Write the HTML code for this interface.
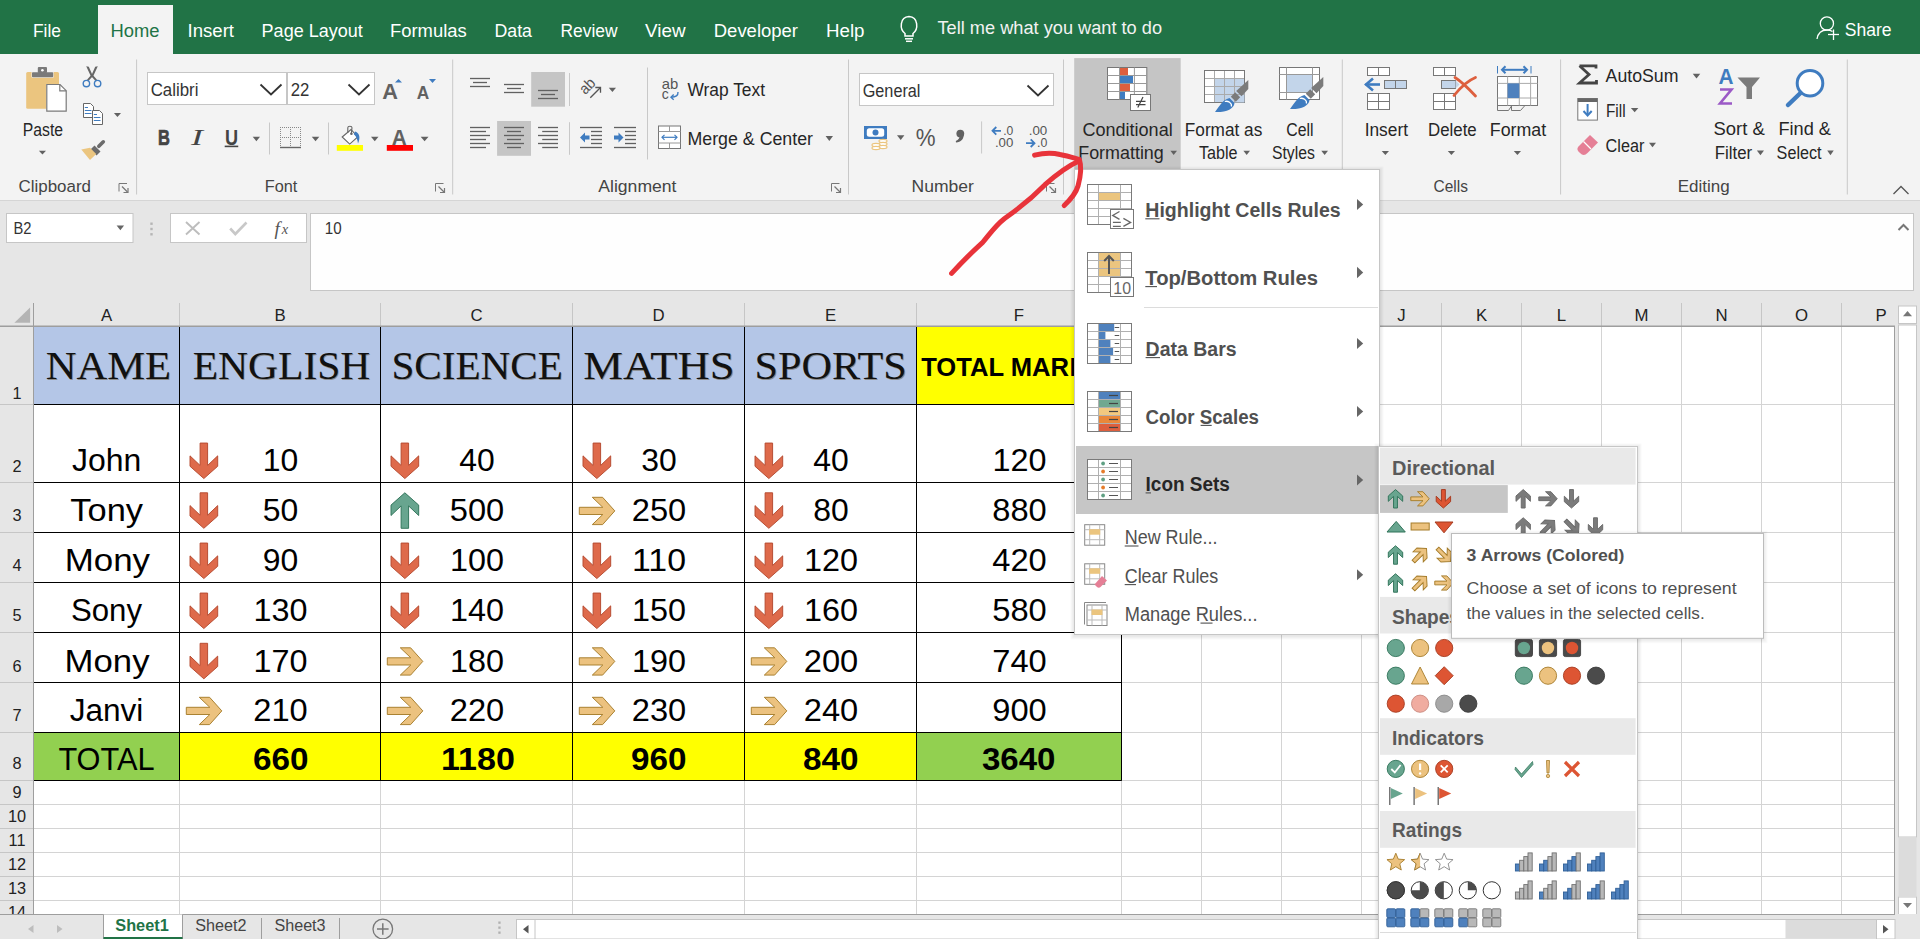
<!DOCTYPE html>
<html><head><meta charset="utf-8"><title>Excel</title>
<style>html,body{margin:0;padding:0;overflow:hidden;background:#e6e6e6;width:1920px;height:939px}svg{display:block}text{white-space:pre}</style>
</head><body>
<svg width="1920" height="939" viewBox="0 0 1920 939">
<rect x="0" y="0" width="1920" height="939" fill="#e6e6e6"/>
<rect x="0" y="0" width="1920" height="54" fill="#217346"/>
<rect x="98" y="5" width="75" height="49" fill="#f3f3f3"/>
<text x="33" y="37" font-family="'Liberation Sans', sans-serif" font-size="18.3" fill="#ffffff" textLength="28" lengthAdjust="spacingAndGlyphs">File</text>
<text x="187.5" y="37" font-family="'Liberation Sans', sans-serif" font-size="18.3" fill="#ffffff" textLength="46.5" lengthAdjust="spacingAndGlyphs">Insert</text>
<text x="261.6" y="37" font-family="'Liberation Sans', sans-serif" font-size="18.3" fill="#ffffff" textLength="101.2" lengthAdjust="spacingAndGlyphs">Page Layout</text>
<text x="390" y="37" font-family="'Liberation Sans', sans-serif" font-size="18.3" fill="#ffffff" textLength="76.7" lengthAdjust="spacingAndGlyphs">Formulas</text>
<text x="494.5" y="37" font-family="'Liberation Sans', sans-serif" font-size="18.3" fill="#ffffff" textLength="37.5" lengthAdjust="spacingAndGlyphs">Data</text>
<text x="560.5" y="37" font-family="'Liberation Sans', sans-serif" font-size="18.3" fill="#ffffff" textLength="57.0" lengthAdjust="spacingAndGlyphs">Review</text>
<text x="645" y="37" font-family="'Liberation Sans', sans-serif" font-size="18.3" fill="#ffffff" textLength="40.5" lengthAdjust="spacingAndGlyphs">View</text>
<text x="713.75" y="37" font-family="'Liberation Sans', sans-serif" font-size="18.3" fill="#ffffff" textLength="84.25" lengthAdjust="spacingAndGlyphs">Developer</text>
<text x="826" y="37" font-family="'Liberation Sans', sans-serif" font-size="18.3" fill="#ffffff" textLength="38.5" lengthAdjust="spacingAndGlyphs">Help</text>
<text x="110.5" y="37" font-family="'Liberation Sans', sans-serif" font-size="18.3" fill="#217346" textLength="49.0" lengthAdjust="spacingAndGlyphs">Home</text>
<path d="M905,33.5 C899.5,29.5 899.5,17 909,16.5 C918.5,17 918.5,29.5 913,33.5 L913,36 L905,36 Z" fill="none" stroke="#fff" stroke-width="1.5"/>
<line x1="905" y1="38.8" x2="913" y2="38.8" stroke="#fff" stroke-width="1.5"/>
<line x1="906" y1="41.3" x2="912" y2="41.3" stroke="#fff" stroke-width="1.5"/>
<text x="937.5" y="33.6" font-family="'Liberation Sans', sans-serif" font-size="17.6" fill="#f2f2f2" textLength="224.5" lengthAdjust="spacingAndGlyphs">Tell me what you want to do</text>
<circle cx="1826.9" cy="23.5" r="6.6" fill="none" stroke="#fff" stroke-width="1.3"/>
<path d="M1817,39 C1818,33 1822,30 1827,30 C1829,30 1831,30.5 1832.5,31.5" fill="none" stroke="#fff" stroke-width="1.3"/>
<line x1="1833.5" y1="29.5" x2="1833.5" y2="40" stroke="#fff" stroke-width="1.3"/>
<line x1="1828" y1="34.5" x2="1839" y2="34.5" stroke="#fff" stroke-width="1.3"/>
<text x="1844.8" y="36.1" font-family="'Liberation Sans', sans-serif" font-size="18.3" fill="#fff" textLength="46.8" lengthAdjust="spacingAndGlyphs">Share</text>
<rect x="0" y="54" width="1920" height="146" fill="#f3f3f3"/>
<line x1="0" y1="200.5" x2="1920" y2="200.5" stroke="#d5d5d5" stroke-width="1"/>
<line x1="136.6" y1="59.5" x2="136.6" y2="194.5" stroke="#c8c8c8" stroke-width="1"/>
<line x1="452.7" y1="59.5" x2="452.7" y2="194.5" stroke="#c8c8c8" stroke-width="1"/>
<line x1="848.5" y1="59.5" x2="848.5" y2="194.5" stroke="#c8c8c8" stroke-width="1"/>
<line x1="1063.5" y1="59.5" x2="1063.5" y2="194.5" stroke="#c8c8c8" stroke-width="1"/>
<line x1="1342.3" y1="59.5" x2="1342.3" y2="194.5" stroke="#c8c8c8" stroke-width="1"/>
<line x1="1560.6" y1="59.5" x2="1560.6" y2="194.5" stroke="#c8c8c8" stroke-width="1"/>
<line x1="1847.3" y1="59.5" x2="1847.3" y2="194.5" stroke="#c8c8c8" stroke-width="1"/>
<text x="18.5" y="191.6" font-family="'Liberation Sans', sans-serif" font-size="16.8" fill="#444" textLength="72.5" lengthAdjust="spacingAndGlyphs">Clipboard</text>
<text x="264.7" y="191.6" font-family="'Liberation Sans', sans-serif" font-size="16.8" fill="#444" textLength="32.6" lengthAdjust="spacingAndGlyphs">Font</text>
<text x="598.3" y="191.6" font-family="'Liberation Sans', sans-serif" font-size="16.8" fill="#444" textLength="78.2" lengthAdjust="spacingAndGlyphs">Alignment</text>
<text x="911.6" y="191.6" font-family="'Liberation Sans', sans-serif" font-size="16.8" fill="#444" textLength="62.3" lengthAdjust="spacingAndGlyphs">Number</text>
<text x="1433.5" y="191.6" font-family="'Liberation Sans', sans-serif" font-size="16.8" fill="#444" textLength="34.4" lengthAdjust="spacingAndGlyphs">Cells</text>
<text x="1677.75" y="191.6" font-family="'Liberation Sans', sans-serif" font-size="16.8" fill="#444" textLength="51.95" lengthAdjust="spacingAndGlyphs">Editing</text>
<path d="M119,191.5 L119,183.5 L127,183.5" fill="none" stroke="#777" stroke-width="1"/>
<line x1="122" y1="186.5" x2="127.5" y2="192.0" stroke="#777" stroke-width="1.2"/>
<path d="M128,188.0 L128,192.5 L123.5,192.5" fill="none" stroke="#777" stroke-width="1.2"/>
<path d="M435.5,191.5 L435.5,183.5 L443.5,183.5" fill="none" stroke="#777" stroke-width="1"/>
<line x1="438.5" y1="186.5" x2="444.0" y2="192.0" stroke="#777" stroke-width="1.2"/>
<path d="M444.5,188.0 L444.5,192.5 L440.0,192.5" fill="none" stroke="#777" stroke-width="1.2"/>
<path d="M831.5,191.5 L831.5,183.5 L839.5,183.5" fill="none" stroke="#777" stroke-width="1"/>
<line x1="834.5" y1="186.5" x2="840.0" y2="192.0" stroke="#777" stroke-width="1.2"/>
<path d="M840.5,188.0 L840.5,192.5 L836.0,192.5" fill="none" stroke="#777" stroke-width="1.2"/>
<path d="M1046.5,191.5 L1046.5,183.5 L1054.5,183.5" fill="none" stroke="#777" stroke-width="1"/>
<line x1="1049.5" y1="186.5" x2="1055.0" y2="192.0" stroke="#777" stroke-width="1.2"/>
<path d="M1055.5,188.0 L1055.5,192.5 L1051.0,192.5" fill="none" stroke="#777" stroke-width="1.2"/>
<rect x="26.2" y="72" width="32.8" height="36.7" fill="#ebc57f" rx="1.5"/>
<rect x="31.5" y="71.8" width="22.2" height="6" fill="#f3f3f3" rx="1"/>
<rect x="32" y="72.3" width="21.2" height="5" fill="#7a7a7a" rx="0.8"/>
<rect x="37.8" y="67" width="9.2" height="6" fill="#7a7a7a" rx="1"/>
<circle cx="42.4" cy="70.3" r="1.3" fill="#fff"/>
<path d="M46.3,84 L60.2,84 L67,90.8 L67,112 L46.3,112 Z" fill="#f3f3f3"/>
<path d="M46.8,84.5 L60,84.5 L66.2,90.7 L66.2,111.2 L46.8,111.2 Z" fill="#fff" stroke="#7a7a7a" stroke-width="1.2"/>
<path d="M59.8,84.5 L59.8,90.9 L66.2,90.9" fill="none" stroke="#7a7a7a" stroke-width="1.2"/>
<text x="22.8" y="135.5" font-family="'Liberation Sans', sans-serif" font-size="17.5" fill="#262626" textLength="40.2" lengthAdjust="spacingAndGlyphs">Paste</text>
<path d="M38.9,150.7 L46,150.7 L42.45,154.5 Z" fill="#616161"/>
<path d="M86.2,66.3 L88.8,66.8 L92,74 L97,79.8 L95.6,81 L90.5,75.5 Z" fill="#666"/>
<path d="M97.8,66.3 L95.2,66.8 L92,74 L87,79.8 L88.4,81 L93.5,75.5 Z" fill="#666"/>
<circle cx="86.4" cy="83.6" r="3.2" fill="none" stroke="#3f7cc0" stroke-width="1.4"/>
<circle cx="97.6" cy="83.6" r="3.2" fill="none" stroke="#3f7cc0" stroke-width="1.4"/>
<path d="M83.5,103.5 L90.5,103.5 L93.5,106.5 L93.5,117.5 L83.5,117.5 Z" fill="#fff" stroke="#666" stroke-width="1"/>
<line x1="84.8" y1="107.5" x2="88" y2="107.5" stroke="#3f7cc0" stroke-width="1"/>
<line x1="84.8" y1="110.5" x2="91.5" y2="110.5" stroke="#3f7cc0" stroke-width="1"/>
<line x1="84.8" y1="113.5" x2="91.5" y2="113.5" stroke="#3f7cc0" stroke-width="1"/>
<path d="M92.5,110.5 L99.5,110.5 L102.5,113.5 L102.5,124.5 L92.5,124.5 Z" fill="#fff" stroke="#666" stroke-width="1"/>
<line x1="93.8" y1="114.5" x2="97" y2="114.5" stroke="#3f7cc0" stroke-width="1"/>
<line x1="93.8" y1="117.5" x2="100.5" y2="117.5" stroke="#3f7cc0" stroke-width="1"/>
<line x1="93.8" y1="120.5" x2="100.5" y2="120.5" stroke="#3f7cc0" stroke-width="1"/>
<path d="M113.9,112.9 L121,112.9 L117.45,117 Z" fill="#616161"/>
<line x1="103.3" y1="141.8" x2="98.8" y2="146.3" stroke="#6b6b6b" stroke-width="3.6" stroke-linecap="round"/>
<path d="M94.5,145.5 L100.5,151.5 L96.5,155.5 L90.5,149.5 Z" fill="#6b6b6b"/>
<path d="M81.3,149.5 L90,147.8 L96.2,154 L90,160 Z" fill="#ebc57f"/>
<rect x="147.5" y="72.5" width="139" height="32" fill="#fff" stroke="#c6c6c6" stroke-width="1"/>
<rect x="287.5" y="72.5" width="87" height="32" fill="#fff" stroke="#c6c6c6" stroke-width="1"/>
<text x="150.7" y="95.5" font-family="'Liberation Sans', sans-serif" font-size="17.5" fill="#333" textLength="47.8" lengthAdjust="spacingAndGlyphs">Calibri</text>
<path d="M260.5,84.5 L271,94.5 L281.5,84.5" fill="none" stroke="#333" stroke-width="1.8"/>
<text x="290.7" y="95.5" font-family="'Liberation Sans', sans-serif" font-size="17.5" fill="#333" textLength="18.6" lengthAdjust="spacingAndGlyphs">22</text>
<path d="M348.5,84.5 L359,94.5 L369.5,84.5" fill="none" stroke="#333" stroke-width="1.8"/>
<text x="382.3" y="98.7" font-family="'Liberation Sans', sans-serif" font-size="22.6" fill="#616161" font-weight="bold" textLength="15.7" lengthAdjust="spacingAndGlyphs">A</text>
<path d="M395,82.5 L402,82.5 L398.5,79 Z" fill="#3f7cc0"/>
<text x="416.8" y="98.7" font-family="'Liberation Sans', sans-serif" font-size="18.5" fill="#616161" font-weight="bold" textLength="12.5" lengthAdjust="spacingAndGlyphs">A</text>
<path d="M429,79 L436,79 L432.5,83 Z" fill="#3f7cc0"/>
<text x="158.1" y="144.7" font-family="'Liberation Sans', sans-serif" font-size="21.5" fill="#444" font-weight="bold" textLength="11.9" lengthAdjust="spacingAndGlyphs" stroke="#444" stroke-width="0.7">B</text>
<text x="191" y="144.9" font-family="'Liberation Serif', serif" font-size="22.3" fill="#444" font-style="italic" textLength="12" lengthAdjust="spacingAndGlyphs">I</text>
<text x="224.9" y="144.7" font-family="'Liberation Sans', sans-serif" font-size="21.5" fill="#444" font-weight="bold" textLength="13.1" lengthAdjust="spacingAndGlyphs">U</text>
<line x1="224.7" y1="146.4" x2="238.25" y2="146.4" stroke="#444" stroke-width="1.6"/>
<path d="M252.7,136.7 L260,136.7 L256.35,141.3 Z" fill="#616161"/>
<line x1="269.5" y1="122.5" x2="269.5" y2="154.5" stroke="#c8c8c8" stroke-width="1"/>
<g fill="#888">
<rect x="280" y="127" width="1" height="1"/>
<rect x="280" y="137" width="1" height="1"/>
<rect x="280" y="127" width="1" height="1"/>
<rect x="290" y="127" width="1" height="1"/>
<rect x="300" y="127" width="1" height="1"/>
<rect x="282" y="127" width="1" height="1"/>
<rect x="282" y="137" width="1" height="1"/>
<rect x="280" y="129" width="1" height="1"/>
<rect x="290" y="129" width="1" height="1"/>
<rect x="300" y="129" width="1" height="1"/>
<rect x="284" y="127" width="1" height="1"/>
<rect x="284" y="137" width="1" height="1"/>
<rect x="280" y="131" width="1" height="1"/>
<rect x="290" y="131" width="1" height="1"/>
<rect x="300" y="131" width="1" height="1"/>
<rect x="286" y="127" width="1" height="1"/>
<rect x="286" y="137" width="1" height="1"/>
<rect x="280" y="133" width="1" height="1"/>
<rect x="290" y="133" width="1" height="1"/>
<rect x="300" y="133" width="1" height="1"/>
<rect x="288" y="127" width="1" height="1"/>
<rect x="288" y="137" width="1" height="1"/>
<rect x="280" y="135" width="1" height="1"/>
<rect x="290" y="135" width="1" height="1"/>
<rect x="300" y="135" width="1" height="1"/>
<rect x="290" y="127" width="1" height="1"/>
<rect x="290" y="137" width="1" height="1"/>
<rect x="280" y="137" width="1" height="1"/>
<rect x="290" y="137" width="1" height="1"/>
<rect x="300" y="137" width="1" height="1"/>
<rect x="292" y="127" width="1" height="1"/>
<rect x="292" y="137" width="1" height="1"/>
<rect x="280" y="139" width="1" height="1"/>
<rect x="290" y="139" width="1" height="1"/>
<rect x="300" y="139" width="1" height="1"/>
<rect x="294" y="127" width="1" height="1"/>
<rect x="294" y="137" width="1" height="1"/>
<rect x="280" y="141" width="1" height="1"/>
<rect x="290" y="141" width="1" height="1"/>
<rect x="300" y="141" width="1" height="1"/>
<rect x="296" y="127" width="1" height="1"/>
<rect x="296" y="137" width="1" height="1"/>
<rect x="280" y="143" width="1" height="1"/>
<rect x="290" y="143" width="1" height="1"/>
<rect x="300" y="143" width="1" height="1"/>
<rect x="298" y="127" width="1" height="1"/>
<rect x="298" y="137" width="1" height="1"/>
<rect x="280" y="145" width="1" height="1"/>
<rect x="290" y="145" width="1" height="1"/>
<rect x="300" y="145" width="1" height="1"/>
<rect x="300" y="127" width="1" height="1"/>
<rect x="300" y="137" width="1" height="1"/>
</g>
<line x1="280" y1="147.5" x2="301" y2="147.5" stroke="#666" stroke-width="1.4"/>
<path d="M311.8,136.7 L319.3,136.7 L315.55,141.3 Z" fill="#616161"/>
<line x1="328.5" y1="122.5" x2="328.5" y2="154.5" stroke="#c8c8c8" stroke-width="1"/>
<path d="M342.2,137 L351,129.5 L357.7,137 L349.7,144.1 Z" fill="#fff" stroke="#666" stroke-width="1.1"/>
<path d="M347.8,133 L347.8,127.8 C347.8,125.8 352,125.8 352,127.8 L351.4,133" fill="none" stroke="#666" stroke-width="1.1"/>
<circle cx="351.4" cy="133.8" r="1.3" fill="#666"/>
<path d="M355,131.5 C359,132.5 361,137 358,143.5 C357.5,139.5 356.5,136.5 353.8,134.2 Z" fill="#3f7cc0"/>
<rect x="336.8" y="145" width="26.2" height="5.8" fill="#ffff00"/>
<path d="M371,136.7 L378.5,136.7 L374.75,141.3 Z" fill="#616161"/>
<text x="391.8" y="145" font-family="'Liberation Sans', sans-serif" font-size="22.6" fill="#616161" font-weight="bold" textLength="15.0" lengthAdjust="spacingAndGlyphs">A</text>
<rect x="386.8" y="145" width="26.2" height="5.8" fill="#ff0000"/>
<path d="M420.7,136.7 L428.5,136.7 L424.6,141.3 Z" fill="#616161"/>
<line x1="470" y1="78.5" x2="490" y2="78.5" stroke="#616161" stroke-width="1.3"/>
<line x1="473" y1="82.5" x2="487" y2="82.5" stroke="#616161" stroke-width="1.3"/>
<line x1="470" y1="86.5" x2="490" y2="86.5" stroke="#616161" stroke-width="1.3"/>
<line x1="504" y1="84.5" x2="524" y2="84.5" stroke="#616161" stroke-width="1.3"/>
<line x1="507" y1="88.5" x2="521" y2="88.5" stroke="#616161" stroke-width="1.3"/>
<line x1="504" y1="92.5" x2="524" y2="92.5" stroke="#616161" stroke-width="1.3"/>
<rect x="531.2" y="72" width="33.8" height="34.7" fill="#c5c5c5"/>
<line x1="538" y1="90.5" x2="558" y2="90.5" stroke="#616161" stroke-width="1.3"/>
<line x1="541" y1="94.5" x2="555" y2="94.5" stroke="#616161" stroke-width="1.3"/>
<line x1="538" y1="98.5" x2="558" y2="98.5" stroke="#616161" stroke-width="1.3"/>
<line x1="569.5" y1="73" x2="569.5" y2="106" stroke="#c8c8c8" stroke-width="1"/>
<text x="0" y="0" font-family="'Liberation Sans', sans-serif" font-size="15.5" fill="#555" textLength="16" lengthAdjust="spacingAndGlyphs" transform="translate(585.2,95.3) rotate(-45)">ab</text>
<line x1="590.3" y1="97.7" x2="600.5" y2="87.5" stroke="#555" stroke-width="1.3"/>
<path d="M595.3,87.5 L600.5,87.5 L600.5,92.7" fill="none" stroke="#555" stroke-width="1.3"/>
<path d="M608.8,87.8 L616,87.8 L612.4,92 Z" fill="#616161"/>
<line x1="647.5" y1="67.5" x2="647.5" y2="159.5" stroke="#c8c8c8" stroke-width="1"/>
<text x="661.8" y="88.8" font-family="'Liberation Sans', sans-serif" font-size="15" fill="#555" textLength="16.5" lengthAdjust="spacingAndGlyphs">ab</text>
<text x="661.8" y="98.6" font-family="'Liberation Sans', sans-serif" font-size="15" fill="#555" textLength="7.0" lengthAdjust="spacingAndGlyphs">c</text>
<path d="M678,92 C678.2,95.5 676,97.2 671.2,97.2" fill="none" stroke="#3f7cc0" stroke-width="1.4"/>
<path d="M673.7,94.6 L671,97.2 L673.7,99.8" fill="none" stroke="#3f7cc0" stroke-width="1.4"/>
<text x="687.5" y="95.6" font-family="'Liberation Sans', sans-serif" font-size="17.5" fill="#262626" textLength="77.5" lengthAdjust="spacingAndGlyphs">Wrap Text</text>
<line x1="470" y1="127.5" x2="490" y2="127.5" stroke="#616161" stroke-width="1.3"/>
<line x1="470" y1="131.5" x2="486" y2="131.5" stroke="#616161" stroke-width="1.3"/>
<line x1="470" y1="135.5" x2="490" y2="135.5" stroke="#616161" stroke-width="1.3"/>
<line x1="470" y1="139.5" x2="486" y2="139.5" stroke="#616161" stroke-width="1.3"/>
<line x1="470" y1="143.5" x2="490" y2="143.5" stroke="#616161" stroke-width="1.3"/>
<line x1="470" y1="147.5" x2="486" y2="147.5" stroke="#616161" stroke-width="1.3"/>
<rect x="497.1" y="121" width="33.9" height="34.8" fill="#c5c5c5"/>
<line x1="504" y1="127.5" x2="524" y2="127.5" stroke="#616161" stroke-width="1.3"/>
<line x1="507" y1="131.5" x2="521" y2="131.5" stroke="#616161" stroke-width="1.3"/>
<line x1="504" y1="135.5" x2="524" y2="135.5" stroke="#616161" stroke-width="1.3"/>
<line x1="507" y1="139.5" x2="521" y2="139.5" stroke="#616161" stroke-width="1.3"/>
<line x1="504" y1="143.5" x2="524" y2="143.5" stroke="#616161" stroke-width="1.3"/>
<line x1="507" y1="147.5" x2="521" y2="147.5" stroke="#616161" stroke-width="1.3"/>
<line x1="538" y1="127.5" x2="558" y2="127.5" stroke="#616161" stroke-width="1.3"/>
<line x1="542.2" y1="131.5" x2="558" y2="131.5" stroke="#616161" stroke-width="1.3"/>
<line x1="538" y1="135.5" x2="558" y2="135.5" stroke="#616161" stroke-width="1.3"/>
<line x1="542.2" y1="139.5" x2="558" y2="139.5" stroke="#616161" stroke-width="1.3"/>
<line x1="538" y1="143.5" x2="558" y2="143.5" stroke="#616161" stroke-width="1.3"/>
<line x1="542.2" y1="147.5" x2="558" y2="147.5" stroke="#616161" stroke-width="1.3"/>
<line x1="569.5" y1="122.2" x2="569.5" y2="154.8" stroke="#c8c8c8" stroke-width="1"/>
<line x1="580" y1="127.5" x2="602" y2="127.5" stroke="#616161" stroke-width="1.3"/>
<line x1="580" y1="147.5" x2="602" y2="147.5" stroke="#616161" stroke-width="1.3"/>
<line x1="591" y1="131.5" x2="602" y2="131.5" stroke="#616161" stroke-width="1.3"/>
<line x1="591" y1="135.5" x2="602" y2="135.5" stroke="#616161" stroke-width="1.3"/>
<line x1="591" y1="139.5" x2="602" y2="139.5" stroke="#616161" stroke-width="1.3"/>
<line x1="591" y1="143.5" x2="602" y2="143.5" stroke="#616161" stroke-width="1.3"/>
<path d="M580,137.5 L585,132.5 L585,135.5 L589.5,135.5 L589.5,139.5 L585,139.5 L585,142.5 Z" fill="#3f7cc0"/>
<line x1="614" y1="127.5" x2="636" y2="127.5" stroke="#616161" stroke-width="1.3"/>
<line x1="614" y1="147.5" x2="636" y2="147.5" stroke="#616161" stroke-width="1.3"/>
<line x1="625" y1="131.5" x2="636" y2="131.5" stroke="#616161" stroke-width="1.3"/>
<line x1="625" y1="135.5" x2="636" y2="135.5" stroke="#616161" stroke-width="1.3"/>
<line x1="625" y1="139.5" x2="636" y2="139.5" stroke="#616161" stroke-width="1.3"/>
<line x1="625" y1="143.5" x2="636" y2="143.5" stroke="#616161" stroke-width="1.3"/>
<path d="M623.5,137.5 L618.5,132.5 L618.5,135.5 L614,135.5 L614,139.5 L618.5,139.5 L618.5,142.5 Z" fill="#3f7cc0"/>
<rect x="658.5" y="126" width="22" height="22.5" fill="#fff" stroke="#777" stroke-width="1"/>
<line x1="658.5" y1="131.5" x2="680.5" y2="131.5" stroke="#999" stroke-width="1"/>
<line x1="658.5" y1="143" x2="680.5" y2="143" stroke="#999" stroke-width="1"/>
<line x1="669.5" y1="126" x2="669.5" y2="131.5" stroke="#999" stroke-width="1"/>
<line x1="669.5" y1="143" x2="669.5" y2="148.5" stroke="#999" stroke-width="1"/>
<line x1="662" y1="137.3" x2="677" y2="137.3" stroke="#3f7cc0" stroke-width="1.2"/>
<path d="M664.5,134.8 L662,137.3 L664.5,139.8 M674.5,134.8 L677,137.3 L674.5,139.8" fill="none" stroke="#3f7cc0" stroke-width="1.2"/>
<text x="687.5" y="144.6" font-family="'Liberation Sans', sans-serif" font-size="17.5" fill="#262626" textLength="125.5" lengthAdjust="spacingAndGlyphs">Merge &amp; Center</text>
<path d="M825.6,136 L833,136 L829.3,141 Z" fill="#616161"/>
<rect x="859.5" y="73.5" width="194" height="32" fill="#fff" stroke="#c6c6c6" stroke-width="1"/>
<text x="862.7" y="96.7" font-family="'Liberation Sans', sans-serif" font-size="17.5" fill="#333" textLength="57.8" lengthAdjust="spacingAndGlyphs">General</text>
<path d="M1027.5,85.5 L1038,95.5 L1048.5,85.5" fill="none" stroke="#333" stroke-width="1.8"/>
<rect x="864" y="126" width="23" height="13" fill="#3f7cc0"/>
<rect x="866.8" y="128.3" width="17.4" height="8.4" fill="#fff" rx="2.5"/>
<circle cx="875.5" cy="132.5" r="3" fill="#3f7cc0"/>
<ellipse cx="883" cy="141" rx="4" ry="1.6" fill="#fff" stroke="#ebc57f" stroke-width="1.2"/>
<ellipse cx="883" cy="144" rx="4" ry="1.6" fill="#fff" stroke="#ebc57f" stroke-width="1.2"/>
<ellipse cx="883" cy="147" rx="4" ry="1.6" fill="#fff" stroke="#ebc57f" stroke-width="1.2"/>
<ellipse cx="876" cy="145" rx="4" ry="1.6" fill="#fff" stroke="#ebc57f" stroke-width="1.2"/>
<ellipse cx="876" cy="148" rx="4" ry="1.6" fill="#fff" stroke="#ebc57f" stroke-width="1.2"/>
<path d="M897,135.3 L904.4,135.3 L900.7,140 Z" fill="#616161"/>
<text x="915.8" y="146.1" font-family="'Liberation Sans', sans-serif" font-size="24" fill="#555" textLength="19.8" lengthAdjust="spacingAndGlyphs">%</text>
<circle cx="960.3" cy="133.6" r="3.9" fill="#616161"/>
<path d="M963.6,134.5 C964,139 961,142 956,142.6 L955.8,141 C958.5,140 959.8,138 959.6,135.5 Z" fill="#616161"/>
<line x1="981.6" y1="121.4" x2="981.6" y2="153.5" stroke="#c8c8c8" stroke-width="1"/>
<text x="1003.2" y="134.6" font-family="'Liberation Sans', sans-serif" font-size="12" fill="#555" textLength="10.1" lengthAdjust="spacingAndGlyphs">.0</text>
<text x="994.9" y="146.9" font-family="'Liberation Sans', sans-serif" font-size="12" fill="#555" textLength="18.4" lengthAdjust="spacingAndGlyphs">.00</text>
<path d="M992.5,130.8 L1001,130.8 M996.3,127 L992.5,130.8 L996.3,134.6" fill="none" stroke="#3f7cc0" stroke-width="1.8"/>
<text x="1028.75" y="134.6" font-family="'Liberation Sans', sans-serif" font-size="12" fill="#555" textLength="18.55" lengthAdjust="spacingAndGlyphs">.00</text>
<text x="1037" y="146.9" font-family="'Liberation Sans', sans-serif" font-size="12" fill="#555" textLength="10.3" lengthAdjust="spacingAndGlyphs">.0</text>
<path d="M1026,143.2 L1034.5,143.2 M1030.7,139.4 L1034.5,143.2 L1030.7,147" fill="none" stroke="#3f7cc0" stroke-width="1.8"/>
<rect x="1074.2" y="58.1" width="106.5" height="111" fill="#c5c5c5"/>
<rect x="1107.5" y="67.5" width="39.3" height="32" fill="#fff" stroke="#777" stroke-width="1"/>
<line x1="1119.5" y1="67.5" x2="1119.5" y2="99.5" stroke="#999" stroke-width="1"/>
<line x1="1134.4" y1="67.5" x2="1134.4" y2="99.5" stroke="#999" stroke-width="1"/>
<line x1="1107.5" y1="75.5" x2="1146.8" y2="75.5" stroke="#999" stroke-width="1"/>
<line x1="1107.5" y1="83.5" x2="1146.8" y2="83.5" stroke="#999" stroke-width="1"/>
<line x1="1107.5" y1="91.5" x2="1146.8" y2="91.5" stroke="#999" stroke-width="1"/>
<rect x="1120" y="68" width="8" height="7" fill="#dd5f3e"/>
<rect x="1120" y="76" width="13" height="7" fill="#3f7cc0"/>
<rect x="1120" y="84" width="10" height="7" fill="#dd5f3e"/>
<rect x="1120" y="92" width="5" height="7" fill="#3f7cc0"/>
<rect x="1130.5" y="94.5" width="20" height="16" fill="#fff" stroke="#777" stroke-width="1"/>
<path d="M1136,101.3 L1145.5,101.3 M1136,104.6 L1145.5,104.6 M1143,97 L1137.8,107.5" fill="none" stroke="#444" stroke-width="1.2"/>
<text x="1082.4" y="135.6" font-family="'Liberation Sans', sans-serif" font-size="17.5" fill="#262626" textLength="90.3" lengthAdjust="spacingAndGlyphs">Conditional</text>
<text x="1078.2" y="158.8" font-family="'Liberation Sans', sans-serif" font-size="17.5" fill="#262626" textLength="85.6" lengthAdjust="spacingAndGlyphs">Formatting</text>
<path d="M1170.4,150.7 L1177,150.7 L1173.7,155 Z" fill="#616161"/>
<rect x="1204.5" y="70.5" width="40" height="32" fill="#fff" stroke="#777" stroke-width="1"/>
<rect x="1214.5" y="78.5" width="30" height="24" fill="#c3d5ea"/>
<line x1="1214.5" y1="70.5" x2="1214.5" y2="102.5" stroke="#aaa" stroke-width="1"/>
<line x1="1224.5" y1="70.5" x2="1224.5" y2="102.5" stroke="#aaa" stroke-width="1"/>
<line x1="1234.5" y1="70.5" x2="1234.5" y2="102.5" stroke="#aaa" stroke-width="1"/>
<line x1="1204.5" y1="78.5" x2="1244.5" y2="78.5" stroke="#aaa" stroke-width="1"/>
<line x1="1204.5" y1="86.5" x2="1244.5" y2="86.5" stroke="#aaa" stroke-width="1"/>
<line x1="1204.5" y1="94.5" x2="1244.5" y2="94.5" stroke="#aaa" stroke-width="1"/>
<line x1="1204.5" y1="70.5" x2="1204.5" y2="102.5" stroke="#777" stroke-width="1"/>
<line x1="1204.5" y1="70.5" x2="1244.5" y2="70.5" stroke="#777" stroke-width="1"/>
<line x1="1204.5" y1="102.5" x2="1230" y2="102.5" stroke="#777" stroke-width="1"/>
<line x1="1244.5" y1="70.5" x2="1244.5" y2="84" stroke="#777" stroke-width="1"/>
<g transform="translate(0,0)">
<path d="M1248.3,80 L1248.3,89 L1241.5,96.3 L1236.2,91 Z" fill="#7b7b7b"/>
<path d="M1235.2,92.3 L1240.2,97.3 L1235.8,101.7 L1230.8,96.7 Z" fill="#7b7b7b"/>
<path d="M1229.5,98 L1234.5,103 C1234,109 1226,112.5 1215,112 C1219,107 1222,100 1229.5,98 Z" fill="#3f7cc0"/>
<path d="M1224.8,101.5 C1228,100.5 1232,103 1231.5,106.5" fill="none" stroke="#fff" stroke-width="1.3"/>
</g>
<text x="1184.8" y="135.6" font-family="'Liberation Sans', sans-serif" font-size="17.5" fill="#262626" textLength="77.5" lengthAdjust="spacingAndGlyphs">Format as</text>
<text x="1199" y="158.8" font-family="'Liberation Sans', sans-serif" font-size="17.5" fill="#262626" textLength="38.6" lengthAdjust="spacingAndGlyphs">Table</text>
<path d="M1243.4,150.7 L1250,150.7 L1246.7,155 Z" fill="#616161"/>
<rect x="1279.5" y="67.5" width="40" height="32" fill="#fff" stroke="#777" stroke-width="1"/>
<rect x="1286.5" y="74.5" width="26" height="18" fill="#c3d5ea"/>
<line x1="1286.5" y1="67.5" x2="1286.5" y2="99.5" stroke="#999" stroke-width="1"/>
<line x1="1312.5" y1="67.5" x2="1312.5" y2="92.5" stroke="#999" stroke-width="1"/>
<line x1="1279.5" y1="74.5" x2="1319.5" y2="74.5" stroke="#999" stroke-width="1"/>
<line x1="1279.5" y1="92.5" x2="1312.5" y2="92.5" stroke="#999" stroke-width="1"/>
<g transform="translate(75,-3)">
<path d="M1248.3,80 L1248.3,89 L1241.5,96.3 L1236.2,91 Z" fill="#7b7b7b"/>
<path d="M1235.2,92.3 L1240.2,97.3 L1235.8,101.7 L1230.8,96.7 Z" fill="#7b7b7b"/>
<path d="M1229.5,98 L1234.5,103 C1234,109 1226,112.5 1215,112 C1219,107 1222,100 1229.5,98 Z" fill="#3f7cc0"/>
<path d="M1224.8,101.5 C1228,100.5 1232,103 1231.5,106.5" fill="none" stroke="#fff" stroke-width="1.3"/>
</g>
<text x="1286.2" y="135.6" font-family="'Liberation Sans', sans-serif" font-size="17.5" fill="#262626" textLength="27.3" lengthAdjust="spacingAndGlyphs">Cell</text>
<text x="1271.9" y="158.8" font-family="'Liberation Sans', sans-serif" font-size="17.5" fill="#262626" textLength="42.9" lengthAdjust="spacingAndGlyphs">Styles</text>
<path d="M1321.3,150.7 L1328,150.7 L1324.65,155 Z" fill="#616161"/>
<rect x="1367.5" y="67.5" width="22" height="8" fill="#fff" stroke="#777" stroke-width="1"/>
<line x1="1378.5" y1="67.5" x2="1378.5" y2="75.5" stroke="#777" stroke-width="1"/>
<rect x="1384.5" y="80.5" width="22" height="8" fill="#c3d5ea" stroke="#777" stroke-width="1"/>
<line x1="1395.5" y1="80.5" x2="1395.5" y2="88.5" stroke="#777" stroke-width="1"/>
<rect x="1367.5" y="93.5" width="22" height="16" fill="#fff" stroke="#777" stroke-width="1"/>
<line x1="1378.5" y1="93.5" x2="1378.5" y2="109.5" stroke="#777" stroke-width="1"/>
<line x1="1367.5" y1="101.5" x2="1389.5" y2="101.5" stroke="#777" stroke-width="1"/>
<line x1="1365.5" y1="84.5" x2="1380" y2="84.5" stroke="#3f7cc0" stroke-width="2.6"/>
<path d="M1373,78.5 L1366,84.5 L1373,90.5" fill="none" stroke="#3f7cc0" stroke-width="2.6"/>
<text x="1364.7" y="135.6" font-family="'Liberation Sans', sans-serif" font-size="17.5" fill="#262626" textLength="43.3" lengthAdjust="spacingAndGlyphs">Insert</text>
<path d="M1381.7,151 L1389,151 L1385.35,155 Z" fill="#616161"/>
<rect x="1433.5" y="67.5" width="22" height="8" fill="#fff" stroke="#777" stroke-width="1"/>
<line x1="1444.5" y1="67.5" x2="1444.5" y2="75.5" stroke="#777" stroke-width="1"/>
<rect x="1441.5" y="80.5" width="14" height="8" fill="#c3d5ea" stroke="#777" stroke-width="1"/>
<path d="M1455.5,80.5 L1459.5,84.5 L1455.5,88.5 Z" fill="#c3d5ea"/>
<rect x="1433.5" y="93.5" width="22" height="16" fill="#fff" stroke="#777" stroke-width="1"/>
<line x1="1444.5" y1="93.5" x2="1444.5" y2="109.5" stroke="#777" stroke-width="1"/>
<line x1="1433.5" y1="101.5" x2="1455.5" y2="101.5" stroke="#777" stroke-width="1"/>
<path d="M1455,77.5 C1462,82 1469,89 1475.5,96 M1475.5,77.5 C1467,81 1460,88 1454,95.5" fill="none" stroke="#dd5f3e" stroke-width="2.8" stroke-linecap="round"/>
<text x="1428" y="135.6" font-family="'Liberation Sans', sans-serif" font-size="17.5" fill="#262626" textLength="48.7" lengthAdjust="spacingAndGlyphs">Delete</text>
<path d="M1447.8,151 L1455,151 L1451.4,155 Z" fill="#616161"/>
<line x1="1497.5" y1="66" x2="1497.5" y2="73.5" stroke="#3f7cc0" stroke-width="1"/>
<line x1="1531" y1="66" x2="1531" y2="73.5" stroke="#3f7cc0" stroke-width="1"/>
<line x1="1502" y1="69.8" x2="1527" y2="69.8" stroke="#3f7cc0" stroke-width="2"/>
<path d="M1505.5,66.3 L1502,69.8 L1505.5,73.3 M1523.5,66.3 L1527,69.8 L1523.5,73.3" fill="none" stroke="#3f7cc0" stroke-width="2"/>
<rect x="1497.5" y="76.5" width="40" height="29" fill="#fff" stroke="#777" stroke-width="1"/>
<line x1="1507.6" y1="76.5" x2="1507.6" y2="105.5" stroke="#aaa" stroke-width="1"/>
<line x1="1519.3" y1="76.5" x2="1519.3" y2="105.5" stroke="#aaa" stroke-width="1"/>
<line x1="1530.6" y1="76.5" x2="1530.6" y2="105.5" stroke="#aaa" stroke-width="1"/>
<line x1="1497.5" y1="83.4" x2="1537.5" y2="83.4" stroke="#aaa" stroke-width="1"/>
<line x1="1497.5" y1="98" x2="1537.5" y2="98" stroke="#aaa" stroke-width="1"/>
<rect x="1507.6" y="83.4" width="11.7" height="14.6" fill="#4f81bd"/>
<path d="M1497.5,105.5 L1497.5,110.5 L1508.5,110.5 L1511.5,106 M1511.5,106 L1511.5,110.5 L1520.5,110.5 L1524.5,106" fill="none" stroke="#777" stroke-width="1"/>
<text x="1489.8" y="135.6" font-family="'Liberation Sans', sans-serif" font-size="17.5" fill="#262626" textLength="56.4" lengthAdjust="spacingAndGlyphs">Format</text>
<path d="M1513.8,151 L1521,151 L1517.4,155 Z" fill="#616161"/>
<path d="M1579.5,65.8 L1596,65.8 L1596,68.5 M1579.5,65.8 L1589,74.5 L1579.5,83 L1596.5,83 L1596.5,80" fill="none" stroke="#444" stroke-width="2.8"/>
<text x="1605.6" y="81.8" font-family="'Liberation Sans', sans-serif" font-size="17.5" fill="#262626" textLength="72.9" lengthAdjust="spacingAndGlyphs">AutoSum</text>
<path d="M1692.75,73.75 L1700.25,73.75 L1696.5,78.4 Z" fill="#616161"/>
<rect x="1577.8" y="98.5" width="19.6" height="21.6" fill="#fff" stroke="#777" stroke-width="1"/>
<rect x="1577.8" y="98.5" width="19.6" height="3.5" fill="#666"/>
<line x1="1587.6" y1="104" x2="1587.6" y2="115" stroke="#3f7cc0" stroke-width="2"/>
<path d="M1583.5,111 L1587.6,115.5 L1591.7,111" fill="none" stroke="#3f7cc0" stroke-width="2"/>
<text x="1606" y="116.5" font-family="'Liberation Sans', sans-serif" font-size="17.5" fill="#262626" textLength="19.6" lengthAdjust="spacingAndGlyphs">Fill</text>
<path d="M1630.9,107.9 L1638.4,107.9 L1634.65,112.2 Z" fill="#616161"/>
<path d="M1590,135 L1598,142.5 L1587.5,153 C1585,155.5 1582.5,155.5 1580,153 L1578.5,151.5 C1577,150 1577,148 1578.5,146.5 Z" fill="#e57f96"/>
<line x1="1583.5" y1="141.5" x2="1591" y2="149" stroke="#fff" stroke-width="1.3"/>
<text x="1605.6" y="151.6" font-family="'Liberation Sans', sans-serif" font-size="17.5" fill="#262626" textLength="38.8" lengthAdjust="spacingAndGlyphs">Clear</text>
<path d="M1649,142.75 L1656,142.75 L1652.5,147.25 Z" fill="#616161"/>
<text x="1718.4" y="83.5" font-family="'Liberation Sans', sans-serif" font-size="22.5" fill="#3f7cc0" font-weight="bold" textLength="15.0" lengthAdjust="spacingAndGlyphs">A</text>
<path d="M1720,89.5 L1731.5,89.5 L1720,103.5 L1732,103.5" fill="none" stroke="#9b59c6" stroke-width="2.6"/>
<path d="M1737.5,77.5 L1760,77.5 L1752,87 L1752,99 L1746.5,99 L1746.5,87 Z" fill="#7b7b7b"/>
<circle cx="1810" cy="83.2" r="12.8" fill="#fff" stroke="#3f7cc0" stroke-width="3"/>
<line x1="1800.5" y1="93" x2="1788" y2="105" stroke="#3f7cc0" stroke-width="4.5" stroke-linecap="round"/>
<text x="1713.4" y="135.25" font-family="'Liberation Sans', sans-serif" font-size="17.5" fill="#262626" textLength="51.35" lengthAdjust="spacingAndGlyphs">Sort &amp;</text>
<text x="1714.7" y="159" font-family="'Liberation Sans', sans-serif" font-size="17.5" fill="#262626" textLength="37.5" lengthAdjust="spacingAndGlyphs">Filter</text>
<path d="M1756.9,150.6 L1764,150.6 L1760.45,155.3 Z" fill="#616161"/>
<text x="1778.4" y="135.25" font-family="'Liberation Sans', sans-serif" font-size="17.5" fill="#262626" textLength="52.6" lengthAdjust="spacingAndGlyphs">Find &amp;</text>
<text x="1776.6" y="159" font-family="'Liberation Sans', sans-serif" font-size="17.5" fill="#262626" textLength="45.0" lengthAdjust="spacingAndGlyphs">Select</text>
<path d="M1827.2,150.6 L1833.75,150.6 L1830.475,155.3 Z" fill="#616161"/>
<path d="M1893.5,194 L1901,186.5 L1908.5,194" fill="none" stroke="#555" stroke-width="1.3"/>
<rect x="6.5" y="213.5" width="126.5" height="29" fill="#fff" stroke="#c6c6c6" stroke-width="1"/>
<text x="13.5" y="234.0" font-family="'Liberation Sans', sans-serif" font-size="16.8" fill="#333" textLength="18.0" lengthAdjust="spacingAndGlyphs">B2</text>
<path d="M116.6,225.6 L124.1,225.6 L120.35,230.25 Z" fill="#666"/>
<rect x="150.3" y="222.5" width="2.4" height="2.4" fill="#b5b5b5"/>
<rect x="150.3" y="227.8" width="2.4" height="2.4" fill="#b5b5b5"/>
<rect x="150.3" y="233.1" width="2.4" height="2.4" fill="#b5b5b5"/>
<rect x="170.5" y="213.5" width="136" height="29" fill="#fff" stroke="#c6c6c6" stroke-width="1"/>
<path d="M186,222 L199.5,234.5 M199.5,222 L186,234.5" fill="none" stroke="#bdbdbd" stroke-width="1.9"/>
<path d="M230.2,228.5 L235.3,234 L246.5,222.5" fill="none" stroke="#c8c8c8" stroke-width="2.6"/>
<text x="274.5" y="235" font-family="'Liberation Serif', serif" font-size="19" fill="#555" font-style="italic">f</text>
<text x="281.8" y="234.3" font-family="'Liberation Serif', serif" font-size="14.5" fill="#555" font-style="italic">x</text>
<rect x="310.5" y="213.5" width="1603" height="77" fill="#fefefe" stroke="#c6c6c6" stroke-width="1"/>
<text x="324.75" y="234.2" font-family="'Liberation Sans', sans-serif" font-size="16.8" fill="#333" textLength="16.85" lengthAdjust="spacingAndGlyphs">10</text>
<path d="M1898.5,230 L1903.5,225 L1908.5,230" fill="none" stroke="#777" stroke-width="2"/>
<rect x="0" y="303" width="1895" height="23.5" fill="#e6e6e6"/>
<rect x="33.5" y="326.5" width="1861.5" height="587.5" fill="#ffffff"/>
<line x1="179.5" y1="326.5" x2="179.5" y2="914" stroke="#d4d4d4" stroke-width="1"/>
<line x1="380.5" y1="326.5" x2="380.5" y2="914" stroke="#d4d4d4" stroke-width="1"/>
<line x1="572.5" y1="326.5" x2="572.5" y2="914" stroke="#d4d4d4" stroke-width="1"/>
<line x1="744.5" y1="326.5" x2="744.5" y2="914" stroke="#d4d4d4" stroke-width="1"/>
<line x1="916.5" y1="326.5" x2="916.5" y2="914" stroke="#d4d4d4" stroke-width="1"/>
<line x1="1121.5" y1="326.5" x2="1121.5" y2="914" stroke="#d4d4d4" stroke-width="1"/>
<line x1="1201.5" y1="326.5" x2="1201.5" y2="914" stroke="#d4d4d4" stroke-width="1"/>
<line x1="1281.5" y1="326.5" x2="1281.5" y2="914" stroke="#d4d4d4" stroke-width="1"/>
<line x1="1361.5" y1="326.5" x2="1361.5" y2="914" stroke="#d4d4d4" stroke-width="1"/>
<line x1="1441.5" y1="326.5" x2="1441.5" y2="914" stroke="#d4d4d4" stroke-width="1"/>
<line x1="1521.5" y1="326.5" x2="1521.5" y2="914" stroke="#d4d4d4" stroke-width="1"/>
<line x1="1601.5" y1="326.5" x2="1601.5" y2="914" stroke="#d4d4d4" stroke-width="1"/>
<line x1="1681.5" y1="326.5" x2="1681.5" y2="914" stroke="#d4d4d4" stroke-width="1"/>
<line x1="1761.5" y1="326.5" x2="1761.5" y2="914" stroke="#d4d4d4" stroke-width="1"/>
<line x1="1841.5" y1="326.5" x2="1841.5" y2="914" stroke="#d4d4d4" stroke-width="1"/>
<line x1="33.5" y1="404.5" x2="1895" y2="404.5" stroke="#d4d4d4" stroke-width="1"/>
<line x1="33.5" y1="482.5" x2="1895" y2="482.5" stroke="#d4d4d4" stroke-width="1"/>
<line x1="33.5" y1="532.5" x2="1895" y2="532.5" stroke="#d4d4d4" stroke-width="1"/>
<line x1="33.5" y1="582.5" x2="1895" y2="582.5" stroke="#d4d4d4" stroke-width="1"/>
<line x1="33.5" y1="632.5" x2="1895" y2="632.5" stroke="#d4d4d4" stroke-width="1"/>
<line x1="33.5" y1="682.5" x2="1895" y2="682.5" stroke="#d4d4d4" stroke-width="1"/>
<line x1="33.5" y1="732.5" x2="1895" y2="732.5" stroke="#d4d4d4" stroke-width="1"/>
<line x1="33.5" y1="780.5" x2="1895" y2="780.5" stroke="#d4d4d4" stroke-width="1"/>
<line x1="33.5" y1="804.5" x2="1895" y2="804.5" stroke="#d4d4d4" stroke-width="1"/>
<line x1="33.5" y1="828.5" x2="1895" y2="828.5" stroke="#d4d4d4" stroke-width="1"/>
<line x1="33.5" y1="852.5" x2="1895" y2="852.5" stroke="#d4d4d4" stroke-width="1"/>
<line x1="33.5" y1="876.5" x2="1895" y2="876.5" stroke="#d4d4d4" stroke-width="1"/>
<line x1="33.5" y1="900.5" x2="1895" y2="900.5" stroke="#d4d4d4" stroke-width="1"/>
<line x1="179.5" y1="303" x2="179.5" y2="326" stroke="#c6c6c6" stroke-width="1"/>
<line x1="380.5" y1="303" x2="380.5" y2="326" stroke="#c6c6c6" stroke-width="1"/>
<line x1="572.5" y1="303" x2="572.5" y2="326" stroke="#c6c6c6" stroke-width="1"/>
<line x1="744.5" y1="303" x2="744.5" y2="326" stroke="#c6c6c6" stroke-width="1"/>
<line x1="916.5" y1="303" x2="916.5" y2="326" stroke="#c6c6c6" stroke-width="1"/>
<line x1="1121.5" y1="303" x2="1121.5" y2="326" stroke="#c6c6c6" stroke-width="1"/>
<line x1="1201.5" y1="303" x2="1201.5" y2="326" stroke="#c6c6c6" stroke-width="1"/>
<line x1="1281.5" y1="303" x2="1281.5" y2="326" stroke="#c6c6c6" stroke-width="1"/>
<line x1="1361.5" y1="303" x2="1361.5" y2="326" stroke="#c6c6c6" stroke-width="1"/>
<line x1="1441.5" y1="303" x2="1441.5" y2="326" stroke="#c6c6c6" stroke-width="1"/>
<line x1="1521.5" y1="303" x2="1521.5" y2="326" stroke="#c6c6c6" stroke-width="1"/>
<line x1="1601.5" y1="303" x2="1601.5" y2="326" stroke="#c6c6c6" stroke-width="1"/>
<line x1="1681.5" y1="303" x2="1681.5" y2="326" stroke="#c6c6c6" stroke-width="1"/>
<line x1="1761.5" y1="303" x2="1761.5" y2="326" stroke="#c6c6c6" stroke-width="1"/>
<line x1="1841.5" y1="303" x2="1841.5" y2="326" stroke="#c6c6c6" stroke-width="1"/>
<line x1="0" y1="326" x2="1895" y2="326" stroke="#9e9e9e" stroke-width="1"/>
<text x="106.5" y="321" font-family="'Liberation Sans', sans-serif" font-size="16.8" fill="#222" text-anchor="middle">A</text>
<text x="280.0" y="321" font-family="'Liberation Sans', sans-serif" font-size="16.8" fill="#222" text-anchor="middle">B</text>
<text x="476.5" y="321" font-family="'Liberation Sans', sans-serif" font-size="16.8" fill="#222" text-anchor="middle">C</text>
<text x="658.5" y="321" font-family="'Liberation Sans', sans-serif" font-size="16.8" fill="#222" text-anchor="middle">D</text>
<text x="830.5" y="321" font-family="'Liberation Sans', sans-serif" font-size="16.8" fill="#222" text-anchor="middle">E</text>
<text x="1019.0" y="321" font-family="'Liberation Sans', sans-serif" font-size="16.8" fill="#222" text-anchor="middle">F</text>
<text x="1161.5" y="321" font-family="'Liberation Sans', sans-serif" font-size="16.8" fill="#222" text-anchor="middle">G</text>
<text x="1241.5" y="321" font-family="'Liberation Sans', sans-serif" font-size="16.8" fill="#222" text-anchor="middle">H</text>
<text x="1321.5" y="321" font-family="'Liberation Sans', sans-serif" font-size="16.8" fill="#222" text-anchor="middle">I</text>
<text x="1401.5" y="321" font-family="'Liberation Sans', sans-serif" font-size="16.8" fill="#222" text-anchor="middle">J</text>
<text x="1481.5" y="321" font-family="'Liberation Sans', sans-serif" font-size="16.8" fill="#222" text-anchor="middle">K</text>
<text x="1561.5" y="321" font-family="'Liberation Sans', sans-serif" font-size="16.8" fill="#222" text-anchor="middle">L</text>
<text x="1641.5" y="321" font-family="'Liberation Sans', sans-serif" font-size="16.8" fill="#222" text-anchor="middle">M</text>
<text x="1721.5" y="321" font-family="'Liberation Sans', sans-serif" font-size="16.8" fill="#222" text-anchor="middle">N</text>
<text x="1801.5" y="321" font-family="'Liberation Sans', sans-serif" font-size="16.8" fill="#222" text-anchor="middle">O</text>
<text x="1881" y="321" font-family="'Liberation Sans', sans-serif" font-size="16.8" fill="#222" text-anchor="middle">P</text>
<path d="M14.4,322.7 L30.1,322.7 L30.1,307.5 Z" fill="#b4b4b4"/>
<line x1="33.5" y1="303" x2="33.5" y2="914" stroke="#9e9e9e" stroke-width="1"/>
<text x="17" y="399" font-family="'Liberation Sans', sans-serif" font-size="16.3" fill="#222" text-anchor="middle">1</text>
<text x="17" y="471.8" font-family="'Liberation Sans', sans-serif" font-size="16.3" fill="#222" text-anchor="middle">2</text>
<text x="17" y="521" font-family="'Liberation Sans', sans-serif" font-size="16.3" fill="#222" text-anchor="middle">3</text>
<text x="17" y="571" font-family="'Liberation Sans', sans-serif" font-size="16.3" fill="#222" text-anchor="middle">4</text>
<text x="17" y="621" font-family="'Liberation Sans', sans-serif" font-size="16.3" fill="#222" text-anchor="middle">5</text>
<text x="17" y="671.5" font-family="'Liberation Sans', sans-serif" font-size="16.3" fill="#222" text-anchor="middle">6</text>
<text x="17" y="721" font-family="'Liberation Sans', sans-serif" font-size="16.3" fill="#222" text-anchor="middle">7</text>
<text x="17" y="769.4" font-family="'Liberation Sans', sans-serif" font-size="16.3" fill="#222" text-anchor="middle">8</text>
<text x="17" y="798" font-family="'Liberation Sans', sans-serif" font-size="16.3" fill="#222" text-anchor="middle">9</text>
<text x="17" y="822" font-family="'Liberation Sans', sans-serif" font-size="16.3" fill="#222" text-anchor="middle">10</text>
<text x="17" y="845.9" font-family="'Liberation Sans', sans-serif" font-size="16.3" fill="#222" text-anchor="middle">11</text>
<text x="17" y="869.7" font-family="'Liberation Sans', sans-serif" font-size="16.3" fill="#222" text-anchor="middle">12</text>
<text x="17" y="893.7" font-family="'Liberation Sans', sans-serif" font-size="16.3" fill="#222" text-anchor="middle">13</text>
<text x="17" y="917.5" font-family="'Liberation Sans', sans-serif" font-size="16.3" fill="#222" text-anchor="middle">14</text>
<line x1="0" y1="404.5" x2="33.5" y2="404.5" stroke="#c6c6c6" stroke-width="1"/>
<line x1="0" y1="482.5" x2="33.5" y2="482.5" stroke="#c6c6c6" stroke-width="1"/>
<line x1="0" y1="532.5" x2="33.5" y2="532.5" stroke="#c6c6c6" stroke-width="1"/>
<line x1="0" y1="582.5" x2="33.5" y2="582.5" stroke="#c6c6c6" stroke-width="1"/>
<line x1="0" y1="632.5" x2="33.5" y2="632.5" stroke="#c6c6c6" stroke-width="1"/>
<line x1="0" y1="682.5" x2="33.5" y2="682.5" stroke="#c6c6c6" stroke-width="1"/>
<line x1="0" y1="732.5" x2="33.5" y2="732.5" stroke="#c6c6c6" stroke-width="1"/>
<line x1="0" y1="780.5" x2="33.5" y2="780.5" stroke="#c6c6c6" stroke-width="1"/>
<line x1="0" y1="804.5" x2="33.5" y2="804.5" stroke="#c6c6c6" stroke-width="1"/>
<line x1="0" y1="828.5" x2="33.5" y2="828.5" stroke="#c6c6c6" stroke-width="1"/>
<line x1="0" y1="852.5" x2="33.5" y2="852.5" stroke="#c6c6c6" stroke-width="1"/>
<line x1="0" y1="876.5" x2="33.5" y2="876.5" stroke="#c6c6c6" stroke-width="1"/>
<line x1="0" y1="900.5" x2="33.5" y2="900.5" stroke="#c6c6c6" stroke-width="1"/>
<rect x="33.5" y="326.5" width="883" height="78" fill="#b4c6e7"/>
<rect x="916.5" y="326.5" width="205" height="78" fill="#ffff00"/>
<rect x="33.5" y="732.5" width="146" height="48" fill="#92d050"/>
<rect x="179.5" y="732.5" width="737" height="48" fill="#ffff00"/>
<rect x="916.5" y="732.5" width="205" height="48" fill="#92d050"/>
<line x1="33.5" y1="404.5" x2="1121.5" y2="404.5" stroke="#000" stroke-width="1"/>
<line x1="33.5" y1="482.5" x2="1121.5" y2="482.5" stroke="#000" stroke-width="1"/>
<line x1="33.5" y1="532.5" x2="1121.5" y2="532.5" stroke="#000" stroke-width="1"/>
<line x1="33.5" y1="582.5" x2="1121.5" y2="582.5" stroke="#000" stroke-width="1"/>
<line x1="33.5" y1="632.5" x2="1121.5" y2="632.5" stroke="#000" stroke-width="1"/>
<line x1="33.5" y1="682.5" x2="1121.5" y2="682.5" stroke="#000" stroke-width="1"/>
<line x1="33.5" y1="732.5" x2="1121.5" y2="732.5" stroke="#000" stroke-width="1"/>
<line x1="33.5" y1="780.5" x2="1121.5" y2="780.5" stroke="#000" stroke-width="1"/>
<line x1="179.5" y1="780.5" x2="1121.5" y2="780.5" stroke="#000" stroke-width="1"/>
<line x1="179.5" y1="326.5" x2="179.5" y2="780.5" stroke="#000" stroke-width="1"/>
<line x1="380.5" y1="326.5" x2="380.5" y2="780.5" stroke="#000" stroke-width="1"/>
<line x1="572.5" y1="326.5" x2="572.5" y2="780.5" stroke="#000" stroke-width="1"/>
<line x1="744.5" y1="326.5" x2="744.5" y2="780.5" stroke="#000" stroke-width="1"/>
<line x1="916.5" y1="326.5" x2="916.5" y2="780.5" stroke="#000" stroke-width="1"/>
<line x1="1121.5" y1="326.5" x2="1121.5" y2="780.5" stroke="#000" stroke-width="1"/>
<line x1="0" y1="326.5" x2="1895" y2="326.5" stroke="#9e9e9e" stroke-width="1"/>
<line x1="33.5" y1="303" x2="33.5" y2="914" stroke="#9e9e9e" stroke-width="1"/>
<text x="46.55" y="380.2" font-family="'Liberation Serif', serif" font-size="40.5" fill="#8a8a8a" textLength="125.25" lengthAdjust="spacingAndGlyphs">NAME</text>
<text x="45.75" y="379.3" font-family="'Liberation Serif', serif" font-size="40.5" fill="#111" textLength="125.25" lengthAdjust="spacingAndGlyphs">NAME</text>
<text x="193.5" y="380.2" font-family="'Liberation Serif', serif" font-size="40.5" fill="#8a8a8a" textLength="177.6" lengthAdjust="spacingAndGlyphs">ENGLISH</text>
<text x="192.7" y="379.3" font-family="'Liberation Serif', serif" font-size="40.5" fill="#111" textLength="177.6" lengthAdjust="spacingAndGlyphs">ENGLISH</text>
<text x="392.3" y="380.2" font-family="'Liberation Serif', serif" font-size="40.5" fill="#8a8a8a" textLength="171.3" lengthAdjust="spacingAndGlyphs">SCIENCE</text>
<text x="391.5" y="379.3" font-family="'Liberation Serif', serif" font-size="40.5" fill="#111" textLength="171.3" lengthAdjust="spacingAndGlyphs">SCIENCE</text>
<text x="584.0999999999999" y="380.2" font-family="'Liberation Serif', serif" font-size="40.5" fill="#8a8a8a" textLength="151.4" lengthAdjust="spacingAndGlyphs">MATHS</text>
<text x="583.3" y="379.3" font-family="'Liberation Serif', serif" font-size="40.5" fill="#111" textLength="151.4" lengthAdjust="spacingAndGlyphs">MATHS</text>
<text x="755.4" y="380.2" font-family="'Liberation Serif', serif" font-size="40.5" fill="#8a8a8a" textLength="152.2" lengthAdjust="spacingAndGlyphs">SPORTS</text>
<text x="754.6" y="379.3" font-family="'Liberation Serif', serif" font-size="40.5" fill="#111" textLength="152.2" lengthAdjust="spacingAndGlyphs">SPORTS</text>
<text x="921.2" y="375.9" font-family="'Liberation Sans', sans-serif" font-size="26" fill="#000" font-weight="bold" textLength="147.9" lengthAdjust="spacingAndGlyphs">TOTAL MAR</text>
<text x="1069.6" y="375.9" font-family="'Liberation Sans', sans-serif" font-size="26" fill="#000" font-weight="bold">KS</text>
<text x="71.9" y="471.25" font-family="'Liberation Sans', sans-serif" font-size="30.6" fill="#000" textLength="69.35" lengthAdjust="spacingAndGlyphs">John</text>
<text x="70.3" y="521" font-family="'Liberation Sans', sans-serif" font-size="30.6" fill="#000" textLength="72.7" lengthAdjust="spacingAndGlyphs">Tony</text>
<text x="64.7" y="571.25" font-family="'Liberation Sans', sans-serif" font-size="30.6" fill="#000" textLength="85.3" lengthAdjust="spacingAndGlyphs">Mony</text>
<text x="71" y="621.25" font-family="'Liberation Sans', sans-serif" font-size="30.6" fill="#000" textLength="71" lengthAdjust="spacingAndGlyphs">Sony</text>
<text x="64.6" y="671.5" font-family="'Liberation Sans', sans-serif" font-size="30.6" fill="#000" textLength="84.9" lengthAdjust="spacingAndGlyphs">Mony</text>
<text x="69.7" y="721" font-family="'Liberation Sans', sans-serif" font-size="30.6" fill="#000" textLength="73.7" lengthAdjust="spacingAndGlyphs">Janvi</text>
<text x="58.4" y="769.5" font-family="'Liberation Sans', sans-serif" font-size="30.6" fill="#000" textLength="96.2" lengthAdjust="spacingAndGlyphs">TOTAL</text>
<text x="262.75" y="471.25" font-family="'Liberation Sans', sans-serif" font-size="30.6" fill="#000" textLength="35.5" lengthAdjust="spacingAndGlyphs">10</text>
<path d="M200.10,443.05 L207.60,443.05 L207.60,465.45 L217.70,455.85 L217.70,466.25 L203.85,478.55 L190.00,466.25 L190.00,455.85 L200.10,465.45 Z" fill="#de6a4b" stroke="#b54a2f" stroke-width="0.95"/>
<text x="459.25" y="471.25" font-family="'Liberation Sans', sans-serif" font-size="30.6" fill="#000" textLength="35.5" lengthAdjust="spacingAndGlyphs">40</text>
<path d="M401.10,443.05 L408.60,443.05 L408.60,465.45 L418.70,455.85 L418.70,466.25 L404.85,478.55 L391.00,466.25 L391.00,455.85 L401.10,465.45 Z" fill="#de6a4b" stroke="#b54a2f" stroke-width="0.95"/>
<text x="641.25" y="471.25" font-family="'Liberation Sans', sans-serif" font-size="30.6" fill="#000" textLength="35.5" lengthAdjust="spacingAndGlyphs">30</text>
<path d="M593.10,443.05 L600.60,443.05 L600.60,465.45 L610.70,455.85 L610.70,466.25 L596.85,478.55 L583.00,466.25 L583.00,455.85 L593.10,465.45 Z" fill="#de6a4b" stroke="#b54a2f" stroke-width="0.95"/>
<text x="813.25" y="471.25" font-family="'Liberation Sans', sans-serif" font-size="30.6" fill="#000" textLength="35.5" lengthAdjust="spacingAndGlyphs">40</text>
<path d="M765.10,443.05 L772.60,443.05 L772.60,465.45 L782.70,455.85 L782.70,466.25 L768.85,478.55 L755.00,466.25 L755.00,455.85 L765.10,465.45 Z" fill="#de6a4b" stroke="#b54a2f" stroke-width="0.95"/>
<text x="992.5" y="471.25" font-family="'Liberation Sans', sans-serif" font-size="30.6" fill="#000" textLength="54.0" lengthAdjust="spacingAndGlyphs">120</text>
<text x="262.75" y="521" font-family="'Liberation Sans', sans-serif" font-size="30.6" fill="#000" textLength="35.5" lengthAdjust="spacingAndGlyphs">50</text>
<path d="M200.10,492.80 L207.60,492.80 L207.60,515.20 L217.70,505.60 L217.70,516.00 L203.85,528.30 L190.00,516.00 L190.00,505.60 L200.10,515.20 Z" fill="#de6a4b" stroke="#b54a2f" stroke-width="0.95"/>
<text x="449.75" y="521" font-family="'Liberation Sans', sans-serif" font-size="30.6" fill="#000" textLength="54.5" lengthAdjust="spacingAndGlyphs">500</text>
<path d="M404.85,492.80 L418.70,505.10 L418.70,515.50 L408.60,505.90 L408.60,528.30 L401.10,528.30 L401.10,505.90 L391.00,515.50 L391.00,505.10 Z" fill="#68a58f" stroke="#2f7358" stroke-width="0.95"/>
<text x="631.75" y="521" font-family="'Liberation Sans', sans-serif" font-size="30.6" fill="#000" textLength="54.5" lengthAdjust="spacingAndGlyphs">250</text>
<path d="M579.30,507.30 L602.80,507.30 L592.30,497.30 L602.60,497.30 L614.80,510.90 L602.60,524.60 L592.30,524.60 L602.80,514.50 L579.30,514.50 Z" fill="#ecc27f" stroke="#a57c2a" stroke-width="0.95"/>
<text x="813.25" y="521" font-family="'Liberation Sans', sans-serif" font-size="30.6" fill="#000" textLength="35.5" lengthAdjust="spacingAndGlyphs">80</text>
<path d="M765.10,492.80 L772.60,492.80 L772.60,515.20 L782.70,505.60 L782.70,516.00 L768.85,528.30 L755.00,516.00 L755.00,505.60 L765.10,515.20 Z" fill="#de6a4b" stroke="#b54a2f" stroke-width="0.95"/>
<text x="992.25" y="521" font-family="'Liberation Sans', sans-serif" font-size="30.6" fill="#000" textLength="54.5" lengthAdjust="spacingAndGlyphs">880</text>
<text x="262.75" y="571.25" font-family="'Liberation Sans', sans-serif" font-size="30.6" fill="#000" textLength="35.5" lengthAdjust="spacingAndGlyphs">90</text>
<path d="M200.10,543.05 L207.60,543.05 L207.60,565.45 L217.70,555.85 L217.70,566.25 L203.85,578.55 L190.00,566.25 L190.00,555.85 L200.10,565.45 Z" fill="#de6a4b" stroke="#b54a2f" stroke-width="0.95"/>
<text x="450.0" y="571.25" font-family="'Liberation Sans', sans-serif" font-size="30.6" fill="#000" textLength="54.0" lengthAdjust="spacingAndGlyphs">100</text>
<path d="M401.10,543.05 L408.60,543.05 L408.60,565.45 L418.70,555.85 L418.70,566.25 L404.85,578.55 L391.00,566.25 L391.00,555.85 L401.10,565.45 Z" fill="#de6a4b" stroke="#b54a2f" stroke-width="0.95"/>
<text x="632.0" y="571.25" font-family="'Liberation Sans', sans-serif" font-size="30.6" fill="#000" textLength="54.0" lengthAdjust="spacingAndGlyphs">110</text>
<path d="M593.10,543.05 L600.60,543.05 L600.60,565.45 L610.70,555.85 L610.70,566.25 L596.85,578.55 L583.00,566.25 L583.00,555.85 L593.10,565.45 Z" fill="#de6a4b" stroke="#b54a2f" stroke-width="0.95"/>
<text x="804.0" y="571.25" font-family="'Liberation Sans', sans-serif" font-size="30.6" fill="#000" textLength="54.0" lengthAdjust="spacingAndGlyphs">120</text>
<path d="M765.10,543.05 L772.60,543.05 L772.60,565.45 L782.70,555.85 L782.70,566.25 L768.85,578.55 L755.00,566.25 L755.00,555.85 L765.10,565.45 Z" fill="#de6a4b" stroke="#b54a2f" stroke-width="0.95"/>
<text x="992.25" y="571.25" font-family="'Liberation Sans', sans-serif" font-size="30.6" fill="#000" textLength="54.5" lengthAdjust="spacingAndGlyphs">420</text>
<text x="253.5" y="621.25" font-family="'Liberation Sans', sans-serif" font-size="30.6" fill="#000" textLength="54.0" lengthAdjust="spacingAndGlyphs">130</text>
<path d="M200.10,593.05 L207.60,593.05 L207.60,615.45 L217.70,605.85 L217.70,616.25 L203.85,628.55 L190.00,616.25 L190.00,605.85 L200.10,615.45 Z" fill="#de6a4b" stroke="#b54a2f" stroke-width="0.95"/>
<text x="450.0" y="621.25" font-family="'Liberation Sans', sans-serif" font-size="30.6" fill="#000" textLength="54.0" lengthAdjust="spacingAndGlyphs">140</text>
<path d="M401.10,593.05 L408.60,593.05 L408.60,615.45 L418.70,605.85 L418.70,616.25 L404.85,628.55 L391.00,616.25 L391.00,605.85 L401.10,615.45 Z" fill="#de6a4b" stroke="#b54a2f" stroke-width="0.95"/>
<text x="632.0" y="621.25" font-family="'Liberation Sans', sans-serif" font-size="30.6" fill="#000" textLength="54.0" lengthAdjust="spacingAndGlyphs">150</text>
<path d="M593.10,593.05 L600.60,593.05 L600.60,615.45 L610.70,605.85 L610.70,616.25 L596.85,628.55 L583.00,616.25 L583.00,605.85 L593.10,615.45 Z" fill="#de6a4b" stroke="#b54a2f" stroke-width="0.95"/>
<text x="804.0" y="621.25" font-family="'Liberation Sans', sans-serif" font-size="30.6" fill="#000" textLength="54.0" lengthAdjust="spacingAndGlyphs">160</text>
<path d="M765.10,593.05 L772.60,593.05 L772.60,615.45 L782.70,605.85 L782.70,616.25 L768.85,628.55 L755.00,616.25 L755.00,605.85 L765.10,615.45 Z" fill="#de6a4b" stroke="#b54a2f" stroke-width="0.95"/>
<text x="992.25" y="621.25" font-family="'Liberation Sans', sans-serif" font-size="30.6" fill="#000" textLength="54.5" lengthAdjust="spacingAndGlyphs">580</text>
<text x="253.5" y="671.5" font-family="'Liberation Sans', sans-serif" font-size="30.6" fill="#000" textLength="54.0" lengthAdjust="spacingAndGlyphs">170</text>
<path d="M200.10,643.30 L207.60,643.30 L207.60,665.70 L217.70,656.10 L217.70,666.50 L203.85,678.80 L190.00,666.50 L190.00,656.10 L200.10,665.70 Z" fill="#de6a4b" stroke="#b54a2f" stroke-width="0.95"/>
<text x="450.0" y="671.5" font-family="'Liberation Sans', sans-serif" font-size="30.6" fill="#000" textLength="54.0" lengthAdjust="spacingAndGlyphs">180</text>
<path d="M387.30,657.80 L410.80,657.80 L400.30,647.80 L410.60,647.80 L422.80,661.40 L410.60,675.10 L400.30,675.10 L410.80,665.00 L387.30,665.00 Z" fill="#ecc27f" stroke="#a57c2a" stroke-width="0.95"/>
<text x="632.0" y="671.5" font-family="'Liberation Sans', sans-serif" font-size="30.6" fill="#000" textLength="54.0" lengthAdjust="spacingAndGlyphs">190</text>
<path d="M579.30,657.80 L602.80,657.80 L592.30,647.80 L602.60,647.80 L614.80,661.40 L602.60,675.10 L592.30,675.10 L602.80,665.00 L579.30,665.00 Z" fill="#ecc27f" stroke="#a57c2a" stroke-width="0.95"/>
<text x="803.75" y="671.5" font-family="'Liberation Sans', sans-serif" font-size="30.6" fill="#000" textLength="54.5" lengthAdjust="spacingAndGlyphs">200</text>
<path d="M751.30,657.80 L774.80,657.80 L764.30,647.80 L774.60,647.80 L786.80,661.40 L774.60,675.10 L764.30,675.10 L774.80,665.00 L751.30,665.00 Z" fill="#ecc27f" stroke="#a57c2a" stroke-width="0.95"/>
<text x="992.25" y="671.5" font-family="'Liberation Sans', sans-serif" font-size="30.6" fill="#000" textLength="54.5" lengthAdjust="spacingAndGlyphs">740</text>
<text x="253.25" y="721" font-family="'Liberation Sans', sans-serif" font-size="30.6" fill="#000" textLength="54.5" lengthAdjust="spacingAndGlyphs">210</text>
<path d="M186.30,707.30 L209.80,707.30 L199.30,697.30 L209.60,697.30 L221.80,710.90 L209.60,724.60 L199.30,724.60 L209.80,714.50 L186.30,714.50 Z" fill="#ecc27f" stroke="#a57c2a" stroke-width="0.95"/>
<text x="449.75" y="721" font-family="'Liberation Sans', sans-serif" font-size="30.6" fill="#000" textLength="54.5" lengthAdjust="spacingAndGlyphs">220</text>
<path d="M387.30,707.30 L410.80,707.30 L400.30,697.30 L410.60,697.30 L422.80,710.90 L410.60,724.60 L400.30,724.60 L410.80,714.50 L387.30,714.50 Z" fill="#ecc27f" stroke="#a57c2a" stroke-width="0.95"/>
<text x="631.75" y="721" font-family="'Liberation Sans', sans-serif" font-size="30.6" fill="#000" textLength="54.5" lengthAdjust="spacingAndGlyphs">230</text>
<path d="M579.30,707.30 L602.80,707.30 L592.30,697.30 L602.60,697.30 L614.80,710.90 L602.60,724.60 L592.30,724.60 L602.80,714.50 L579.30,714.50 Z" fill="#ecc27f" stroke="#a57c2a" stroke-width="0.95"/>
<text x="803.75" y="721" font-family="'Liberation Sans', sans-serif" font-size="30.6" fill="#000" textLength="54.5" lengthAdjust="spacingAndGlyphs">240</text>
<path d="M751.30,707.30 L774.80,707.30 L764.30,697.30 L774.60,697.30 L786.80,710.90 L774.60,724.60 L764.30,724.60 L774.80,714.50 L751.30,714.50 Z" fill="#ecc27f" stroke="#a57c2a" stroke-width="0.95"/>
<text x="992.25" y="721" font-family="'Liberation Sans', sans-serif" font-size="30.6" fill="#000" textLength="54.5" lengthAdjust="spacingAndGlyphs">900</text>
<text x="253" y="769.5" font-family="'Liberation Sans', sans-serif" font-size="30.6" fill="#000" font-weight="bold" textLength="55.5" lengthAdjust="spacingAndGlyphs">660</text>
<text x="441" y="769.5" font-family="'Liberation Sans', sans-serif" font-size="30.6" fill="#000" font-weight="bold" textLength="73.8" lengthAdjust="spacingAndGlyphs">1180</text>
<text x="631" y="769.5" font-family="'Liberation Sans', sans-serif" font-size="30.6" fill="#000" font-weight="bold" textLength="55.5" lengthAdjust="spacingAndGlyphs">960</text>
<text x="803" y="769.5" font-family="'Liberation Sans', sans-serif" font-size="30.6" fill="#000" font-weight="bold" textLength="55.5" lengthAdjust="spacingAndGlyphs">840</text>
<text x="982" y="769.5" font-family="'Liberation Sans', sans-serif" font-size="30.6" fill="#000" font-weight="bold" textLength="73.5" lengthAdjust="spacingAndGlyphs">3640</text>
<rect x="1895" y="303" width="25" height="636" fill="#e6e6e6"/>
<line x1="1894.5" y1="326.5" x2="1894.5" y2="914" stroke="#9e9e9e" stroke-width="1"/>
<rect x="1898.5" y="306" width="18" height="17.5" fill="#fff" stroke="#c6c6c6" stroke-width="1"/>
<path d="M1903,316.2 L1907.5,311 L1912,316.2 Z" fill="#777"/>
<rect x="1898.5" y="325" width="18" height="512" fill="#fff" stroke="#c6c6c6" stroke-width="1"/>
<rect x="1898.5" y="897" width="18" height="17.5" fill="#fff" stroke="#c6c6c6" stroke-width="1"/>
<path d="M1903,903 L1907.5,908 L1912,903 Z" fill="#777"/>
<rect x="0" y="914" width="1920" height="25" fill="#e6e6e6"/>
<line x1="0" y1="914.5" x2="1895" y2="914.5" stroke="#9e9e9e" stroke-width="1"/>
<path d="M33.5,925 L28,929 L33.5,933 Z" fill="#bdbdbd"/>
<path d="M57,925 L62.5,929 L57,933 Z" fill="#bdbdbd"/>
<rect x="103.5" y="914.5" width="79" height="25" fill="#fff"/>
<line x1="103.5" y1="914.5" x2="103.5" y2="939" stroke="#9e9e9e" stroke-width="1"/>
<line x1="182.5" y1="914.5" x2="182.5" y2="939" stroke="#9e9e9e" stroke-width="1"/>
<rect x="103.5" y="937" width="79" height="2" fill="#217346"/>
<text x="115.3" y="930.5" font-family="'Liberation Sans', sans-serif" font-size="16.3" fill="#217346" font-weight="bold" textLength="53.45" lengthAdjust="spacingAndGlyphs">Sheet1</text>
<text x="195.3" y="930.5" font-family="'Liberation Sans', sans-serif" font-size="16.3" fill="#444" textLength="51.3" lengthAdjust="spacingAndGlyphs">Sheet2</text>
<line x1="261.5" y1="918" x2="261.5" y2="939" stroke="#9e9e9e" stroke-width="1"/>
<text x="274.4" y="930.5" font-family="'Liberation Sans', sans-serif" font-size="16.3" fill="#444" textLength="51.2" lengthAdjust="spacingAndGlyphs">Sheet3</text>
<line x1="339.5" y1="918" x2="339.5" y2="939" stroke="#9e9e9e" stroke-width="1"/>
<circle cx="382.8" cy="929" r="9.8" fill="none" stroke="#777" stroke-width="1.3"/>
<line x1="377" y1="929" x2="388.6" y2="929" stroke="#777" stroke-width="1.5"/>
<line x1="382.8" y1="923.2" x2="382.8" y2="934.8" stroke="#777" stroke-width="1.5"/>
<rect x="498.3" y="921.5" width="2.3" height="2.3" fill="#b0b0b0"/>
<rect x="498.3" y="926.5" width="2.3" height="2.3" fill="#b0b0b0"/>
<rect x="498.3" y="931.5" width="2.3" height="2.3" fill="#b0b0b0"/>
<rect x="516.5" y="919.5" width="1360" height="19.5" fill="#fff" stroke="#c6c6c6" stroke-width="1"/>
<rect x="516.5" y="919.5" width="18.5" height="19.5" fill="#fff" stroke="#c6c6c6" stroke-width="1"/>
<path d="M528.5,925 L523,929.2 L528.5,933.4 Z" fill="#555"/>
<rect x="1785.5" y="920" width="91" height="18.5" fill="#dcdcdc"/>
<rect x="1876.5" y="919.5" width="18.5" height="19.5" fill="#fff" stroke="#c6c6c6" stroke-width="1"/>
<path d="M1883,925 L1888.5,929.2 L1883,933.4 Z" fill="#555"/>
<rect x="1898.5" y="837" width="18" height="60" fill="#dcdcdc"/>
<rect x="1073.5" y="169.5" width="307.0" height="467.0" fill="rgba(0,0,0,0.022)"/>
<rect x="1072.5" y="168.5" width="309.0" height="469.0" fill="rgba(0,0,0,0.022)"/>
<rect x="1071.5" y="167.5" width="311.0" height="471.0" fill="rgba(0,0,0,0.022)"/>
<rect x="1070.5" y="166.5" width="313.0" height="473.0" fill="rgba(0,0,0,0.022)"/>
<rect x="1074.5" y="169.5" width="305.0" height="465.0" fill="#ffffff" stroke="#c6c6c6" stroke-width="1"/>
<rect x="1087.5" y="184.5" width="44" height="40" fill="#fff"/>
<rect x="1098.5" y="192.5" width="22" height="8" fill="#ebc57f"/>
<line x1="1098.5" y1="184.5" x2="1098.5" y2="224.5" stroke="#b0b0b0" stroke-width="1"/>
<line x1="1120.5" y1="184.5" x2="1120.5" y2="224.5" stroke="#b0b0b0" stroke-width="1"/>
<line x1="1087.5" y1="192.5" x2="1131.5" y2="192.5" stroke="#b0b0b0" stroke-width="1"/>
<line x1="1087.5" y1="200.5" x2="1131.5" y2="200.5" stroke="#b0b0b0" stroke-width="1"/>
<line x1="1087.5" y1="208.5" x2="1131.5" y2="208.5" stroke="#b0b0b0" stroke-width="1"/>
<line x1="1087.5" y1="216.5" x2="1131.5" y2="216.5" stroke="#b0b0b0" stroke-width="1"/>
<rect x="1087.5" y="184.5" width="44" height="40" fill="none" stroke="#7a7a7a" stroke-width="1"/>
<rect x="1110.5" y="209.5" width="23" height="19" fill="#fff" stroke="#777" stroke-width="1"/>
<path d="M1119.5,211.5 L1112.7,215.4 L1119.5,219.4 M1123.4,218.4 L1130.6,222.4 L1123.4,226.4 M1112.9,222.4 L1120.8,222.4 M1112.9,226.4 L1120.8,226.4" fill="none" stroke="#666" stroke-width="1.3"/>
<text x="1145.3" y="217" font-family="'Liberation Sans', sans-serif" font-size="20" fill="#505050" font-weight="bold" textLength="195.4" lengthAdjust="spacingAndGlyphs">Highlight Cells Rules</text>
<line x1="1145.3" y1="218.8" x2="1159.5" y2="218.8" stroke="#505050" stroke-width="1.1"/>
<path d="M1357,199 L1363.2,204.5 L1357,210 Z" fill="#666"/>
<rect x="1087.5" y="252.5" width="44" height="40" fill="#fff"/>
<rect x="1099" y="253" width="21" height="24" fill="#ebc57f"/>
<line x1="1098.5" y1="252.5" x2="1098.5" y2="292.5" stroke="#b0b0b0" stroke-width="1"/>
<line x1="1120.5" y1="252.5" x2="1120.5" y2="292.5" stroke="#b0b0b0" stroke-width="1"/>
<line x1="1087.5" y1="260.5" x2="1131.5" y2="260.5" stroke="#b0b0b0" stroke-width="1"/>
<line x1="1087.5" y1="268.5" x2="1131.5" y2="268.5" stroke="#b0b0b0" stroke-width="1"/>
<line x1="1087.5" y1="276.5" x2="1131.5" y2="276.5" stroke="#b0b0b0" stroke-width="1"/>
<line x1="1087.5" y1="284.5" x2="1131.5" y2="284.5" stroke="#b0b0b0" stroke-width="1"/>
<rect x="1087.5" y="252.5" width="44" height="40" fill="none" stroke="#7a7a7a" stroke-width="1"/>
<line x1="1109" y1="256" x2="1109" y2="274" stroke="#555" stroke-width="2"/>
<path d="M1104.2,261 L1109,256 L1113.8,261" fill="none" stroke="#555" stroke-width="2"/>
<rect x="1110.5" y="277.5" width="23" height="19" fill="#fff" stroke="#777" stroke-width="1"/>
<text x="1113.3" y="293.8" font-family="'Liberation Sans', sans-serif" font-size="17" fill="#666" textLength="17.7" lengthAdjust="spacingAndGlyphs">10</text>
<text x="1145.3" y="284.8" font-family="'Liberation Sans', sans-serif" font-size="20" fill="#505050" font-weight="bold" textLength="172.6" lengthAdjust="spacingAndGlyphs">Top/Bottom Rules</text>
<line x1="1145.3" y1="286.6" x2="1157" y2="286.6" stroke="#505050" stroke-width="1.1"/>
<path d="M1357,266.8 L1363.2,272.5 L1357,278.2 Z" fill="#666"/>
<line x1="1144" y1="307.5" x2="1378" y2="307.5" stroke="#dcdcdc" stroke-width="1"/>
<rect x="1087.5" y="323.5" width="44" height="40" fill="#fff"/>
<rect x="1099" y="324" width="15.2" height="7.5" fill="#4f81bd"/>
<rect x="1099" y="332" width="6.4" height="7.5" fill="#4f81bd"/>
<rect x="1099" y="340" width="11.4" height="7.5" fill="#4f81bd"/>
<rect x="1099" y="348" width="14.1" height="7.5" fill="#4f81bd"/>
<rect x="1099" y="356" width="11.4" height="7.5" fill="#4f81bd"/>
<line x1="1098.5" y1="323.5" x2="1098.5" y2="363.5" stroke="#b0b0b0" stroke-width="1"/>
<line x1="1120.5" y1="323.5" x2="1120.5" y2="363.5" stroke="#b0b0b0" stroke-width="1"/>
<line x1="1087.5" y1="331.5" x2="1131.5" y2="331.5" stroke="#b0b0b0" stroke-width="1"/>
<line x1="1087.5" y1="339.5" x2="1131.5" y2="339.5" stroke="#b0b0b0" stroke-width="1"/>
<line x1="1087.5" y1="347.5" x2="1131.5" y2="347.5" stroke="#b0b0b0" stroke-width="1"/>
<line x1="1087.5" y1="355.5" x2="1131.5" y2="355.5" stroke="#b0b0b0" stroke-width="1"/>
<rect x="1087.5" y="323.5" width="44" height="40" fill="none" stroke="#7a7a7a" stroke-width="1"/>
<line x1="1114.7" y1="327.5" x2="1119.2" y2="327.5" stroke="#555" stroke-width="1"/>
<line x1="1114.7" y1="335.5" x2="1119.2" y2="335.5" stroke="#555" stroke-width="1"/>
<line x1="1114.7" y1="343.5" x2="1119.2" y2="343.5" stroke="#555" stroke-width="1"/>
<line x1="1114.7" y1="351.5" x2="1119.2" y2="351.5" stroke="#555" stroke-width="1"/>
<line x1="1114.7" y1="359.5" x2="1119.2" y2="359.5" stroke="#555" stroke-width="1"/>
<text x="1145.6" y="355.8" font-family="'Liberation Sans', sans-serif" font-size="20" fill="#505050" font-weight="bold" textLength="91.0" lengthAdjust="spacingAndGlyphs">Data Bars</text>
<line x1="1145.6" y1="357.6" x2="1160" y2="357.6" stroke="#505050" stroke-width="1.1"/>
<path d="M1357,338 L1363.2,343.5 L1357,349 Z" fill="#666"/>
<rect x="1087.5" y="391.5" width="44" height="40" fill="#fff"/>
<rect x="1099" y="392" width="21" height="7.5" fill="#4f81bd"/>
<rect x="1099" y="400" width="21" height="7.5" fill="#70a890"/>
<rect x="1099" y="408" width="21" height="7.5" fill="#f2c97f"/>
<rect x="1099" y="416" width="21" height="7.5" fill="#e9883a"/>
<rect x="1099" y="424" width="21" height="7.5" fill="#dd5f3e"/>
<line x1="1098.5" y1="391.5" x2="1098.5" y2="431.5" stroke="#b0b0b0" stroke-width="1"/>
<line x1="1120.5" y1="391.5" x2="1120.5" y2="431.5" stroke="#b0b0b0" stroke-width="1"/>
<line x1="1087.5" y1="399.5" x2="1131.5" y2="399.5" stroke="#b0b0b0" stroke-width="1"/>
<line x1="1087.5" y1="407.5" x2="1131.5" y2="407.5" stroke="#b0b0b0" stroke-width="1"/>
<line x1="1087.5" y1="415.5" x2="1131.5" y2="415.5" stroke="#b0b0b0" stroke-width="1"/>
<line x1="1087.5" y1="423.5" x2="1131.5" y2="423.5" stroke="#b0b0b0" stroke-width="1"/>
<rect x="1087.5" y="391.5" width="44" height="40" fill="none" stroke="#7a7a7a" stroke-width="1"/>
<line x1="1109" y1="395.5" x2="1118" y2="395.5" stroke="#444" stroke-width="1.2"/>
<line x1="1109" y1="403.5" x2="1118" y2="403.5" stroke="#444" stroke-width="1.2"/>
<line x1="1109" y1="411.5" x2="1118" y2="411.5" stroke="#444" stroke-width="1.2"/>
<line x1="1109" y1="419.5" x2="1118" y2="419.5" stroke="#444" stroke-width="1.2"/>
<line x1="1109" y1="427.5" x2="1118" y2="427.5" stroke="#444" stroke-width="1.2"/>
<text x="1145.6" y="423.6" font-family="'Liberation Sans', sans-serif" font-size="20" fill="#505050" font-weight="bold" textLength="113.4" lengthAdjust="spacingAndGlyphs">Color Scales</text>
<line x1="1200.6" y1="425.4" x2="1211.7" y2="425.4" stroke="#505050" stroke-width="1.1"/>
<path d="M1357,406 L1363.2,411.5 L1357,417 Z" fill="#666"/>
<rect x="1076" y="446" width="302.2" height="68" fill="#c6c6c6"/>
<rect x="1087.5" y="459.5" width="44" height="40" fill="#fff"/>
<line x1="1098.5" y1="459.5" x2="1098.5" y2="499.5" stroke="#b0b0b0" stroke-width="1"/>
<line x1="1120.5" y1="459.5" x2="1120.5" y2="499.5" stroke="#b0b0b0" stroke-width="1"/>
<line x1="1087.5" y1="467.5" x2="1131.5" y2="467.5" stroke="#b0b0b0" stroke-width="1"/>
<line x1="1087.5" y1="475.5" x2="1131.5" y2="475.5" stroke="#b0b0b0" stroke-width="1"/>
<line x1="1087.5" y1="483.5" x2="1131.5" y2="483.5" stroke="#b0b0b0" stroke-width="1"/>
<line x1="1087.5" y1="491.5" x2="1131.5" y2="491.5" stroke="#b0b0b0" stroke-width="1"/>
<rect x="1087.5" y="459.5" width="44" height="40" fill="none" stroke="#7a7a7a" stroke-width="1"/>
<circle cx="1103.1" cy="463.5" r="1.9" fill="#5fa083"/>
<line x1="1109" y1="463.5" x2="1118" y2="463.5" stroke="#555" stroke-width="1"/>
<circle cx="1103.1" cy="471.5" r="1.9" fill="#e67c2b"/>
<line x1="1109" y1="471.5" x2="1118" y2="471.5" stroke="#555" stroke-width="1"/>
<circle cx="1103.1" cy="479.5" r="1.9" fill="#5fa083"/>
<line x1="1109" y1="479.5" x2="1118" y2="479.5" stroke="#555" stroke-width="1"/>
<circle cx="1103.1" cy="487.5" r="1.9" fill="#e67c2b"/>
<line x1="1109" y1="487.5" x2="1118" y2="487.5" stroke="#555" stroke-width="1"/>
<circle cx="1103.1" cy="495.5" r="1.9" fill="#5fa083"/>
<line x1="1109" y1="495.5" x2="1118" y2="495.5" stroke="#555" stroke-width="1"/>
<text x="1145.6" y="491.1" font-family="'Liberation Sans', sans-serif" font-size="20" fill="#262626" font-weight="bold" textLength="84.3" lengthAdjust="spacingAndGlyphs">Icon Sets</text>
<line x1="1145.6" y1="492.9" x2="1151" y2="492.9" stroke="#505050" stroke-width="1.1"/>
<path d="M1357,474.4 L1363.2,479.95 L1357,485.5 Z" fill="#666"/>
<rect x="1084.7" y="524.7" width="20" height="20.5" fill="#fff" stroke="#888" stroke-width="1"/>
<line x1="1089.7" y1="524.7" x2="1089.7" y2="545.2" stroke="#bbb" stroke-width="1"/>
<line x1="1099.7" y1="524.7" x2="1099.7" y2="545.2" stroke="#bbb" stroke-width="1"/>
<line x1="1084.7" y1="529.7" x2="1104.7" y2="529.7" stroke="#bbb" stroke-width="1"/>
<line x1="1084.7" y1="539.7" x2="1104.7" y2="539.7" stroke="#bbb" stroke-width="1"/>
<rect x="1089.2" y="529.2" width="11" height="5.5" fill="#ebc57f"/>
<text x="1124.7" y="544.2" font-family="'Liberation Sans', sans-serif" font-size="19.5" fill="#505050" textLength="92.8" lengthAdjust="spacingAndGlyphs">New Rule...</text>
<line x1="1124.7" y1="546" x2="1138.5" y2="546" stroke="#505050" stroke-width="1.1"/>
<rect x="1084.7" y="563.8" width="20" height="20.5" fill="#fff" stroke="#888" stroke-width="1"/>
<line x1="1089.7" y1="563.8" x2="1089.7" y2="584.3" stroke="#bbb" stroke-width="1"/>
<line x1="1099.7" y1="563.8" x2="1099.7" y2="584.3" stroke="#bbb" stroke-width="1"/>
<line x1="1084.7" y1="568.8" x2="1104.7" y2="568.8" stroke="#bbb" stroke-width="1"/>
<line x1="1084.7" y1="578.8" x2="1104.7" y2="578.8" stroke="#bbb" stroke-width="1"/>
<rect x="1089.2" y="568.3" width="11" height="5.5" fill="#ebc57f"/>
<path d="M1102,576 L1107,580.5 L1100.5,587 C1099.5,588 1098,588 1097,587 L1094.5,584.5 Z" fill="#e57f96"/>
<text x="1124.7" y="582.8" font-family="'Liberation Sans', sans-serif" font-size="19.5" fill="#505050" textLength="93.6" lengthAdjust="spacingAndGlyphs">Clear Rules</text>
<line x1="1124.7" y1="584.6" x2="1136" y2="584.6" stroke="#505050" stroke-width="1.1"/>
<path d="M1357,569.2 L1363.2,574.75 L1357,580.3 Z" fill="#666"/>
<path d="M1084.5,624.5 L1084.5,602.5 L1106,602.5" fill="none" stroke="#888" stroke-width="1"/>
<rect x="1087.0" y="605.0" width="20" height="20.5" fill="#fff" stroke="#888" stroke-width="1"/>
<line x1="1092.0" y1="605.0" x2="1092.0" y2="625.5" stroke="#bbb" stroke-width="1"/>
<line x1="1102.0" y1="605.0" x2="1102.0" y2="625.5" stroke="#bbb" stroke-width="1"/>
<line x1="1087.0" y1="610.0" x2="1107.0" y2="610.0" stroke="#bbb" stroke-width="1"/>
<line x1="1087.0" y1="620.0" x2="1107.0" y2="620.0" stroke="#bbb" stroke-width="1"/>
<rect x="1091.5" y="609.5" width="11" height="5.5" fill="#ebc57f"/>
<text x="1124.7" y="621.3" font-family="'Liberation Sans', sans-serif" font-size="19.5" fill="#505050" textLength="132.8" lengthAdjust="spacingAndGlyphs">Manage Rules...</text>
<line x1="1200.5" y1="623.1" x2="1212.5" y2="623.1" stroke="#505050" stroke-width="1.1"/>
<rect x="1377.5" y="446.5" width="261.0" height="494.5" fill="rgba(0,0,0,0.022)"/>
<rect x="1376.5" y="445.5" width="263.0" height="496.5" fill="rgba(0,0,0,0.022)"/>
<rect x="1375.5" y="444.5" width="265.0" height="498.5" fill="rgba(0,0,0,0.022)"/>
<rect x="1374.5" y="443.5" width="267.0" height="500.5" fill="rgba(0,0,0,0.022)"/>
<rect x="1378.5" y="446.5" width="259.0" height="497.5" fill="#ffffff" stroke="#c6c6c6" stroke-width="1"/>
<rect x="1380" y="447.7" width="255.6" height="36.900000000000034" fill="#e9e9e9"/>
<text x="1392" y="475" font-family="'Liberation Sans', sans-serif" font-size="19.8" fill="#5a5a5a" font-weight="bold" textLength="103.1" lengthAdjust="spacingAndGlyphs">Directional</text>
<rect x="1380" y="485.1" width="127.8" height="27.8" fill="#c6c6c6"/>
<path d="M1395.50,489.57 L1402.70,495.97 L1402.70,501.37 L1397.45,496.38 L1397.45,508.03 L1393.55,508.03 L1393.55,496.38 L1388.30,501.37 L1388.30,495.97 Z" fill="#68a58f" stroke="#2f7358" stroke-width="0.95"/>
<path d="M1410.77,496.90 L1422.99,496.90 L1417.53,491.70 L1422.89,491.70 L1429.23,498.77 L1422.89,505.90 L1417.53,505.90 L1422.99,500.65 L1410.77,500.65 Z" fill="#ecc27f" stroke="#a57c2a" stroke-width="0.95"/>
<path d="M1441.45,489.57 L1445.35,489.57 L1445.35,501.22 L1450.60,496.23 L1450.60,501.63 L1443.40,508.03 L1436.20,501.63 L1436.20,496.23 L1441.45,501.22 Z" fill="#dd5533" stroke="#a53a1f" stroke-width="0.95"/>
<path d="M1523.20,489.57 L1530.40,495.97 L1530.40,501.37 L1525.15,496.38 L1525.15,508.03 L1521.25,508.03 L1521.25,496.38 L1516.00,501.37 L1516.00,495.97 Z" fill="#7b7b7b" stroke="#6a6a6a" stroke-width="0.95"/>
<path d="M1538.77,496.90 L1550.99,496.90 L1545.53,491.70 L1550.89,491.70 L1557.23,498.77 L1550.89,505.90 L1545.53,505.90 L1550.99,500.65 L1538.77,500.65 Z" fill="#7b7b7b" stroke="#6a6a6a" stroke-width="0.95"/>
<path d="M1569.55,489.57 L1573.45,489.57 L1573.45,501.22 L1578.70,496.23 L1578.70,501.63 L1571.50,508.03 L1564.30,501.63 L1564.30,496.23 L1569.55,501.22 Z" fill="#7b7b7b" stroke="#6a6a6a" stroke-width="0.95"/>
<path d="M1387,532 L1396.2,521.4 L1405.3,532 Z" fill="#68a58f" stroke="#2f7358" stroke-width="1"/>
<rect x="1411.1" y="523" width="18.1" height="7" fill="#ecc27f" stroke="#a57c2a" stroke-width="1"/>
<path d="M1435,522 L1453,522 L1444,532.8 Z" fill="#dd5533" stroke="#a53a1f" stroke-width="1"/>
<path d="M1523.20,517.77 L1530.40,524.17 L1530.40,529.57 L1525.15,524.58 L1525.15,536.23 L1521.25,536.23 L1521.25,524.58 L1516.00,529.57 L1516.00,524.17 Z" fill="#7b7b7b" stroke="#6a6a6a" stroke-width="0.95"/>
<g transform="rotate(45 1548 527)">
<path d="M1548.00,517.77 L1555.20,524.17 L1555.20,529.57 L1549.95,524.58 L1549.95,536.23 L1546.05,536.23 L1546.05,524.58 L1540.80,529.57 L1540.80,524.17 Z" fill="#7b7b7b" stroke="#6a6a6a" stroke-width="0.95"/>
</g>
<g transform="rotate(135 1572 527)">
<path d="M1572.00,517.77 L1579.20,524.17 L1579.20,529.57 L1573.95,524.58 L1573.95,536.23 L1570.05,536.23 L1570.05,524.58 L1564.80,529.57 L1564.80,524.17 Z" fill="#7b7b7b" stroke="#6a6a6a" stroke-width="0.95"/>
</g>
<path d="M1593.55,517.77 L1597.45,517.77 L1597.45,529.42 L1602.70,524.43 L1602.70,529.83 L1595.50,536.23 L1588.30,529.83 L1588.30,524.43 L1593.55,529.42 Z" fill="#7b7b7b" stroke="#6a6a6a" stroke-width="0.95"/>
<path d="M1395.50,545.77 L1402.70,552.17 L1402.70,557.57 L1397.45,552.58 L1397.45,564.23 L1393.55,564.23 L1393.55,552.58 L1388.30,557.57 L1388.30,552.17 Z" fill="#68a58f" stroke="#2f7358" stroke-width="0.95"/>
<g transform="rotate(45 1420 555)">
<path d="M1420.00,545.77 L1427.20,552.17 L1427.20,557.57 L1421.95,552.58 L1421.95,564.23 L1418.05,564.23 L1418.05,552.58 L1412.80,557.57 L1412.80,552.17 Z" fill="#ecc27f" stroke="#a57c2a" stroke-width="0.95"/>
</g>
<g transform="rotate(135 1444 555)">
<path d="M1444.00,545.77 L1451.20,552.17 L1451.20,557.57 L1445.95,552.58 L1445.95,564.23 L1442.05,564.23 L1442.05,552.58 L1436.80,557.57 L1436.80,552.17 Z" fill="#ecc27f" stroke="#a57c2a" stroke-width="0.95"/>
</g>
<path d="M1395.50,573.77 L1402.70,580.17 L1402.70,585.57 L1397.45,580.58 L1397.45,592.23 L1393.55,592.23 L1393.55,580.58 L1388.30,585.57 L1388.30,580.17 Z" fill="#68a58f" stroke="#2f7358" stroke-width="0.95"/>
<g transform="rotate(45 1420 583)">
<path d="M1420.00,573.77 L1427.20,580.17 L1427.20,585.57 L1421.95,580.58 L1421.95,592.23 L1418.05,592.23 L1418.05,580.58 L1412.80,585.57 L1412.80,580.17 Z" fill="#ecc27f" stroke="#a57c2a" stroke-width="0.95"/>
</g>
<path d="M1434.77,581.10 L1446.99,581.10 L1441.53,575.90 L1446.89,575.90 L1453.23,582.97 L1446.89,590.10 L1441.53,590.10 L1446.99,584.85 L1434.77,584.85 Z" fill="#ecc27f" stroke="#a57c2a" stroke-width="0.95"/>
<rect x="1380" y="596.9" width="255.6" height="36.60000000000002" fill="#e9e9e9"/>
<text x="1392" y="623.5" font-family="'Liberation Sans', sans-serif" font-size="19.8" fill="#5a5a5a" font-weight="bold" textLength="68" lengthAdjust="spacingAndGlyphs">Shapes</text>
<circle cx="1395.8" cy="648" r="8.6" fill="#68a58f" stroke="#2f7358" stroke-width="0.9"/>
<circle cx="1420.1" cy="648" r="8.6" fill="#ecc27f" stroke="#a57c2a" stroke-width="0.9"/>
<circle cx="1444.2" cy="648" r="8.6" fill="#dd5533" stroke="#a53a1f" stroke-width="0.9"/>
<rect x="1515.3000000000002" y="639.4" width="17.2" height="17.2" fill="#4a4a4a" stroke="#333" stroke-width="0.8" rx="2"/>
<circle cx="1523.9" cy="648" r="6.2" fill="#68a58f"/>
<rect x="1539.4" y="639.4" width="17.2" height="17.2" fill="#4a4a4a" stroke="#333" stroke-width="0.8" rx="2"/>
<circle cx="1548" cy="648" r="6.2" fill="#ecc27f"/>
<rect x="1563.4" y="639.4" width="17.2" height="17.2" fill="#4a4a4a" stroke="#333" stroke-width="0.8" rx="2"/>
<circle cx="1572" cy="648" r="6.2" fill="#dd5533"/>
<circle cx="1395.8" cy="675.7" r="8.6" fill="#68a58f" stroke="#2f7358" stroke-width="0.9"/>
<path d="M1411.5,684 L1420.1,667 L1428.6999999999998,684 Z" fill="#ecc27f" stroke="#a57c2a" stroke-width="0.9"/>
<path d="M1444.2,666.7 L1453.2,675.7 L1444.2,684.7 L1435.2,675.7 Z" fill="#dd5533" stroke="#a53a1f" stroke-width="0.9"/>
<circle cx="1523.9" cy="675.7" r="8.6" fill="#68a58f" stroke="#2f7358" stroke-width="0.9"/>
<circle cx="1548" cy="675.7" r="8.6" fill="#ecc27f" stroke="#a57c2a" stroke-width="0.9"/>
<circle cx="1572" cy="675.7" r="8.6" fill="#dd5533" stroke="#a53a1f" stroke-width="0.9"/>
<circle cx="1596" cy="675.7" r="8.6" fill="#4b4b4b" stroke="#3a3a3a" stroke-width="0.9"/>
<circle cx="1395.8" cy="703.7" r="8.6" fill="#dd5533" stroke="#a53a1f" stroke-width="0.9"/>
<circle cx="1420.1" cy="703.7" r="8.6" fill="#f0aca0" stroke="#c98a80" stroke-width="0.9"/>
<circle cx="1444.2" cy="703.7" r="8.6" fill="#a8a8a8" stroke="#888" stroke-width="0.9"/>
<circle cx="1468.3" cy="703.7" r="8.6" fill="#4b4b4b" stroke="#3a3a3a" stroke-width="0.9"/>
<rect x="1380" y="718.2" width="255.6" height="36.59999999999991" fill="#e9e9e9"/>
<text x="1392" y="744.8" font-family="'Liberation Sans', sans-serif" font-size="19.8" fill="#5a5a5a" font-weight="bold" textLength="92" lengthAdjust="spacingAndGlyphs">Indicators</text>
<circle cx="1395.8" cy="768.9" r="8.6" fill="#68a58f" stroke="#2f7358" stroke-width="0.9"/>
<circle cx="1420.1" cy="768.9" r="8.6" fill="#ecc27f" stroke="#a57c2a" stroke-width="0.9"/>
<circle cx="1444.2" cy="768.9" r="8.6" fill="#dd5533" stroke="#a53a1f" stroke-width="0.9"/>
<path d="M1391.3,769 L1394.8,772.5 L1400.6,765" fill="none" stroke="#fff" stroke-width="1.8"/>
<line x1="1420.1" y1="763.5" x2="1420.1" y2="770" stroke="#fff" stroke-width="2.2"/>
<circle cx="1420.1" cy="773.5" r="1.2" fill="#fff"/>
<path d="M1440.7,765.4 L1447.7,772.4 M1447.7,765.4 L1440.7,772.4" fill="none" stroke="#fff" stroke-width="1.8"/>
<path d="M1515.5,767 L1521.5,774 L1532.5,761.5 L1533,764.5 L1521.5,777.5 L1515,769.5 Z" fill="#68a58f" stroke="#2f7358" stroke-width="0.7"/>
<path d="M1546.5,760.5 L1549.5,760.5 L1549,773 L1547,773 Z" fill="#ecc27f" stroke="#a57c2a" stroke-width="0.8"/>
<circle cx="1548" cy="776" r="1.7" fill="#ecc27f" stroke="#a57c2a" stroke-width="0.7"/>
<path d="M1565,762 L1579,776 M1579,762 L1565,776" fill="none" stroke="#dd5533" stroke-width="3.2"/>
<line x1="1389.8" y1="787" x2="1389.8" y2="805" stroke="#555" stroke-width="1.2"/>
<path d="M1390.8,788 L1402.8,793.5 L1390.8,799 Z" fill="#68a58f"/>
<line x1="1414.1" y1="787" x2="1414.1" y2="805" stroke="#555" stroke-width="1.2"/>
<path d="M1415.1,788 L1427.1,793.5 L1415.1,799 Z" fill="#ecc27f"/>
<line x1="1438.2" y1="787" x2="1438.2" y2="805" stroke="#555" stroke-width="1.2"/>
<path d="M1439.2,788 L1451.2,793.5 L1439.2,799 Z" fill="#dd5533"/>
<rect x="1380" y="811" width="255.6" height="36.799999999999955" fill="#e9e9e9"/>
<text x="1392" y="837.3" font-family="'Liberation Sans', sans-serif" font-size="19.8" fill="#5a5a5a" font-weight="bold" textLength="70" lengthAdjust="spacingAndGlyphs">Ratings</text>
<path d="M1395.80,853.20 L1398.26,859.11 L1404.64,859.63 L1399.78,863.79 L1401.27,870.02 L1395.80,866.68 L1390.33,870.02 L1391.82,863.79 L1386.96,859.63 L1393.34,859.11 Z" fill="#ecc27f" stroke="#a57c2a" stroke-width="0.9"/>
<path d="M1420.10,853.20 L1422.56,859.11 L1428.94,859.63 L1424.08,863.79 L1425.57,870.02 L1420.10,866.68 L1414.63,870.02 L1416.12,863.79 L1411.26,859.63 L1417.64,859.11 Z" fill="#fff" stroke="#888" stroke-width="0.9"/>
<clipPath id="hs"><rect x="1410.8" y="853.2" width="9.3" height="18.6"/></clipPath>
<path d="M1420.10,853.20 L1422.56,859.11 L1428.94,859.63 L1424.08,863.79 L1425.57,870.02 L1420.10,866.68 L1414.63,870.02 L1416.12,863.79 L1411.26,859.63 L1417.64,859.11 Z" fill="#ecc27f" stroke="#a57c2a" stroke-width="0.9" clip-path="url(#hs)"/>
<path d="M1444.20,853.20 L1446.66,859.11 L1453.04,859.63 L1448.18,863.79 L1449.67,870.02 L1444.20,866.68 L1438.73,870.02 L1440.22,863.79 L1435.36,859.63 L1441.74,859.11 Z" fill="#fff" stroke="#888" stroke-width="0.9"/>
<rect x="1515.4" y="864.0" width="4.2" height="7.0" fill="#4f81bd" stroke="#2f5f97" stroke-width="0.9"/>
<rect x="1519.6000000000001" y="860.3" width="4.2" height="10.7" fill="#b8b8b8" stroke="#707070" stroke-width="0.9"/>
<rect x="1523.8000000000002" y="856.6" width="4.2" height="14.4" fill="#b8b8b8" stroke="#707070" stroke-width="0.9"/>
<rect x="1528.0" y="852.9" width="4.2" height="18.1" fill="#b8b8b8" stroke="#707070" stroke-width="0.9"/>
<rect x="1539.5" y="864.0" width="4.2" height="7.0" fill="#4f81bd" stroke="#2f5f97" stroke-width="0.9"/>
<rect x="1543.7" y="860.3" width="4.2" height="10.7" fill="#4f81bd" stroke="#2f5f97" stroke-width="0.9"/>
<rect x="1547.9" y="856.6" width="4.2" height="14.4" fill="#b8b8b8" stroke="#707070" stroke-width="0.9"/>
<rect x="1552.1" y="852.9" width="4.2" height="18.1" fill="#b8b8b8" stroke="#707070" stroke-width="0.9"/>
<rect x="1563.5" y="864.0" width="4.2" height="7.0" fill="#4f81bd" stroke="#2f5f97" stroke-width="0.9"/>
<rect x="1567.7" y="860.3" width="4.2" height="10.7" fill="#4f81bd" stroke="#2f5f97" stroke-width="0.9"/>
<rect x="1571.9" y="856.6" width="4.2" height="14.4" fill="#4f81bd" stroke="#2f5f97" stroke-width="0.9"/>
<rect x="1576.1" y="852.9" width="4.2" height="18.1" fill="#b8b8b8" stroke="#707070" stroke-width="0.9"/>
<rect x="1587.5" y="864.0" width="4.2" height="7.0" fill="#4f81bd" stroke="#2f5f97" stroke-width="0.9"/>
<rect x="1591.7" y="860.3" width="4.2" height="10.7" fill="#4f81bd" stroke="#2f5f97" stroke-width="0.9"/>
<rect x="1595.9" y="856.6" width="4.2" height="14.4" fill="#4f81bd" stroke="#2f5f97" stroke-width="0.9"/>
<rect x="1600.1" y="852.9" width="4.2" height="18.1" fill="#4f81bd" stroke="#2f5f97" stroke-width="0.9"/>
<circle cx="1395.8" cy="890.3" r="8.6" fill="#fff" stroke="#333" stroke-width="1"/>
<circle cx="1395.8" cy="890.3" r="8.6" fill="#4b4b4b" stroke="#333" stroke-width="1"/>
<circle cx="1419.8" cy="890.3" r="8.6" fill="#fff" stroke="#333" stroke-width="1"/>
<path d="M1419.8,890.3 L1419.8,881.7 A8.6,8.6 0 1 1 1411.2,890.3 Z" fill="#4b4b4b"/>
<circle cx="1443.8" cy="890.3" r="8.6" fill="#fff" stroke="#333" stroke-width="1"/>
<path d="M1443.8,881.7 A8.6,8.6 0 0 0 1443.8,898.9 Z" fill="#4b4b4b"/>
<circle cx="1467.8" cy="890.3" r="8.6" fill="#fff" stroke="#333" stroke-width="1"/>
<path d="M1467.8,890.3 L1467.8,881.7 A8.6,8.6 0 0 1 1476.3999999999999,890.3 Z" fill="#4b4b4b"/>
<circle cx="1491.8" cy="890.3" r="8.6" fill="#fff" stroke="#333" stroke-width="1"/>
<rect x="1515.4" y="892.0" width="4.2" height="7.0" fill="#b8b8b8" stroke="#707070" stroke-width="0.9"/>
<rect x="1519.6000000000001" y="888.3" width="4.2" height="10.7" fill="#b8b8b8" stroke="#707070" stroke-width="0.9"/>
<rect x="1523.8000000000002" y="884.6" width="4.2" height="14.4" fill="#b8b8b8" stroke="#707070" stroke-width="0.9"/>
<rect x="1528.0" y="880.9" width="4.2" height="18.1" fill="#b8b8b8" stroke="#707070" stroke-width="0.9"/>
<rect x="1539.5" y="892.0" width="4.2" height="7.0" fill="#4f81bd" stroke="#2f5f97" stroke-width="0.9"/>
<rect x="1543.7" y="888.3" width="4.2" height="10.7" fill="#b8b8b8" stroke="#707070" stroke-width="0.9"/>
<rect x="1547.9" y="884.6" width="4.2" height="14.4" fill="#b8b8b8" stroke="#707070" stroke-width="0.9"/>
<rect x="1552.1" y="880.9" width="4.2" height="18.1" fill="#b8b8b8" stroke="#707070" stroke-width="0.9"/>
<rect x="1563.5" y="892.0" width="4.2" height="7.0" fill="#4f81bd" stroke="#2f5f97" stroke-width="0.9"/>
<rect x="1567.7" y="888.3" width="4.2" height="10.7" fill="#4f81bd" stroke="#2f5f97" stroke-width="0.9"/>
<rect x="1571.9" y="884.6" width="4.2" height="14.4" fill="#b8b8b8" stroke="#707070" stroke-width="0.9"/>
<rect x="1576.1" y="880.9" width="4.2" height="18.1" fill="#b8b8b8" stroke="#707070" stroke-width="0.9"/>
<rect x="1587.5" y="892.0" width="4.2" height="7.0" fill="#4f81bd" stroke="#2f5f97" stroke-width="0.9"/>
<rect x="1591.7" y="888.3" width="4.2" height="10.7" fill="#4f81bd" stroke="#2f5f97" stroke-width="0.9"/>
<rect x="1595.9" y="884.6" width="4.2" height="14.4" fill="#4f81bd" stroke="#2f5f97" stroke-width="0.9"/>
<rect x="1600.1" y="880.9" width="4.2" height="18.1" fill="#b8b8b8" stroke="#707070" stroke-width="0.9"/>
<rect x="1611.5" y="892.0" width="4.2" height="7.0" fill="#4f81bd" stroke="#2f5f97" stroke-width="0.9"/>
<rect x="1615.7" y="888.3" width="4.2" height="10.7" fill="#4f81bd" stroke="#2f5f97" stroke-width="0.9"/>
<rect x="1619.9" y="884.6" width="4.2" height="14.4" fill="#4f81bd" stroke="#2f5f97" stroke-width="0.9"/>
<rect x="1624.1" y="880.9" width="4.2" height="18.1" fill="#4f81bd" stroke="#2f5f97" stroke-width="0.9"/>
<rect x="1386.8" y="908.8" width="8.8" height="8.8" fill="#4f81bd" stroke="#2f5f97" stroke-width="0.9" rx="1"/>
<rect x="1386.8" y="918.0" width="8.8" height="8.8" fill="#4f81bd" stroke="#2f5f97" stroke-width="0.9" rx="1"/>
<rect x="1396.0" y="908.8" width="8.8" height="8.8" fill="#4f81bd" stroke="#2f5f97" stroke-width="0.9" rx="1"/>
<rect x="1396.0" y="918.0" width="8.8" height="8.8" fill="#4f81bd" stroke="#2f5f97" stroke-width="0.9" rx="1"/>
<rect x="1410.8" y="908.8" width="8.8" height="8.8" fill="#4f81bd" stroke="#2f5f97" stroke-width="0.9" rx="1"/>
<rect x="1410.8" y="918.0" width="8.8" height="8.8" fill="#4f81bd" stroke="#2f5f97" stroke-width="0.9" rx="1"/>
<rect x="1420.0" y="908.8" width="8.8" height="8.8" fill="#b8b8b8" stroke="#777" stroke-width="0.9" rx="1"/>
<rect x="1420.0" y="918.0" width="8.8" height="8.8" fill="#4f81bd" stroke="#2f5f97" stroke-width="0.9" rx="1"/>
<rect x="1434.8" y="908.8" width="8.8" height="8.8" fill="#b8b8b8" stroke="#777" stroke-width="0.9" rx="1"/>
<rect x="1434.8" y="918.0" width="8.8" height="8.8" fill="#4f81bd" stroke="#2f5f97" stroke-width="0.9" rx="1"/>
<rect x="1444.0" y="908.8" width="8.8" height="8.8" fill="#b8b8b8" stroke="#777" stroke-width="0.9" rx="1"/>
<rect x="1444.0" y="918.0" width="8.8" height="8.8" fill="#4f81bd" stroke="#2f5f97" stroke-width="0.9" rx="1"/>
<rect x="1458.8" y="908.8" width="8.8" height="8.8" fill="#b8b8b8" stroke="#777" stroke-width="0.9" rx="1"/>
<rect x="1458.8" y="918.0" width="8.8" height="8.8" fill="#4f81bd" stroke="#2f5f97" stroke-width="0.9" rx="1"/>
<rect x="1468.0" y="908.8" width="8.8" height="8.8" fill="#b8b8b8" stroke="#777" stroke-width="0.9" rx="1"/>
<rect x="1468.0" y="918.0" width="8.8" height="8.8" fill="#b8b8b8" stroke="#777" stroke-width="0.9" rx="1"/>
<rect x="1482.8" y="908.8" width="8.8" height="8.8" fill="#b8b8b8" stroke="#777" stroke-width="0.9" rx="1"/>
<rect x="1482.8" y="918.0" width="8.8" height="8.8" fill="#b8b8b8" stroke="#777" stroke-width="0.9" rx="1"/>
<rect x="1492.0" y="908.8" width="8.8" height="8.8" fill="#b8b8b8" stroke="#777" stroke-width="0.9" rx="1"/>
<rect x="1492.0" y="918.0" width="8.8" height="8.8" fill="#b8b8b8" stroke="#777" stroke-width="0.9" rx="1"/>
<line x1="1380" y1="932.5" x2="1636" y2="932.5" stroke="#dcdcdc" stroke-width="1"/>
<rect x="1450.5" y="533.5" width="314" height="106.8" fill="rgba(0,0,0,0.02)"/>
<rect x="1449.5" y="532.5" width="316" height="108.8" fill="rgba(0,0,0,0.02)"/>
<rect x="1448.5" y="531.5" width="318" height="110.8" fill="rgba(0,0,0,0.02)"/>
<rect x="1447.5" y="530.5" width="320" height="112.8" fill="rgba(0,0,0,0.02)"/>
<rect x="1451.5" y="533.5" width="312" height="104.8" fill="#ffffff" stroke="#bcbcbc" stroke-width="1"/>
<text x="1466.6" y="561.3" font-family="'Liberation Sans', sans-serif" font-size="16.8" fill="#505050" font-weight="bold" textLength="157.9" lengthAdjust="spacingAndGlyphs">3 Arrows (Colored)</text>
<text x="1466.6" y="594" font-family="'Liberation Sans', sans-serif" font-size="16" fill="#505050" textLength="270.0" lengthAdjust="spacingAndGlyphs">Choose a set of icons to represent</text>
<text x="1466.6" y="618.9" font-family="'Liberation Sans', sans-serif" font-size="16" fill="#505050" textLength="238.1" lengthAdjust="spacingAndGlyphs">the values in the selected cells.</text>
<path d="M951.6,273.4 C962,262 972,252 982.7,242.3 C990,234 995,226 1004,219 C1012,213 1025,205 1045,184.7 C1057,174 1068,166 1079.4,160.8" fill="none" stroke="#e8333a" stroke-width="5" stroke-linecap="round" stroke-linejoin="round"/>
<path d="M1034.6,155.2 C1043,153 1052,152.5 1060,154.5 C1068,156 1074,158 1079.4,159.5 C1081.5,166 1081,175 1078,186 C1076,193 1070,200 1064.2,205.5" fill="none" stroke="#e8333a" stroke-width="5" stroke-linecap="round" stroke-linejoin="round"/>
</svg>
</body></html>
